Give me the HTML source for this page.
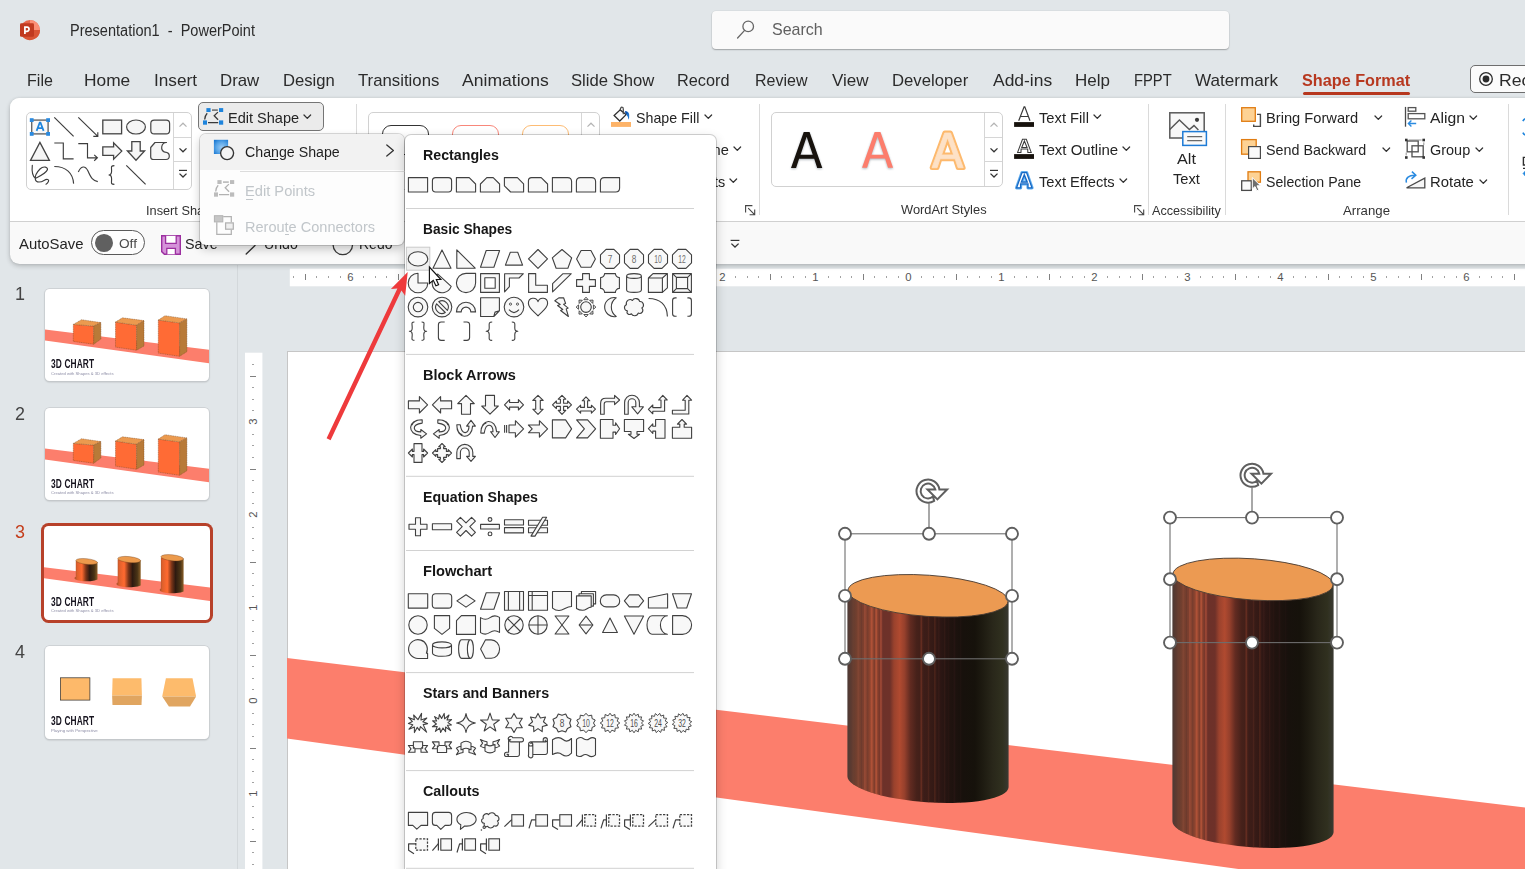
<!DOCTYPE html>
<html><head><meta charset="utf-8"><title>PowerPoint</title><style>html,body{margin:0;padding:0}
body{width:1525px;height:869px;overflow:hidden;position:relative;background:#e1e6e9;font-family:"Liberation Sans",sans-serif}
.a{position:absolute;display:block}
.t{position:absolute;white-space:nowrap;transform-origin:0 50%;display:block}
svg{overflow:visible}
#root{position:absolute;left:0;top:0;width:1525px;height:869px;overflow:hidden}</style></head><body><div id="root">
<svg class="a" style="left:17px;top:17px;" width="26" height="26" viewBox="0 0 26 26">
      <circle cx="13" cy="13" r="10" fill="#e8664a"/>
      <path d="M13 3 A10 10 0 0 1 23 13 L13 13 Z" fill="#fb8f76"/>
      <path d="M13 13 L23 13 A10 10 0 0 1 5 19 Z" fill="#d95535"/>
      <rect x="3" y="6.2" width="14" height="13.6" rx="1.3" fill="#c13a20"/>
      <path d="M7.9 16.9 V10.2 H10 a2.05 2.05 0 0 1 0 4.1 H8.2" fill="none" stroke="#fff" stroke-width="1.7"/>
    </svg>
<span id="t0" class="t" style="left:70.1px;top:22.5px;font-size:16px;line-height:16px;color:#2b2b2b;transform:scaleX(0.9080);">Presentation1&nbsp; -&nbsp; PowerPoint</span>
<div class="a" style="left:711.5px;top:10.5px;width:517px;height:38.5px;background:#fafafa;border-radius:4px;box-shadow:0 1px 1.5px rgba(0,0,0,.28),0 0 0 .5px rgba(0,0,0,.06);"></div>
<svg class="a" style="left:735px;top:17px;" width="20" height="24" viewBox="0 0 20 24"><circle cx="13.2" cy="9.4" r="5.3" fill="none" stroke="#666" stroke-width="1.3"/><path d="M9.6 13.4 L2.6 21" stroke="#666" stroke-width="1.3" stroke-linecap="round"/></svg>
<span id="t1" class="t" style="left:771.7px;top:21.0px;font-size:17px;line-height:17px;color:#606060;transform:scaleX(0.9427);">Search</span>
<span id="t2" class="t" style="left:26.5px;top:71.6px;font-size:17px;line-height:17px;color:#2b2b2b;transform:scaleX(0.9446);">File</span>
<span id="t3" class="t" style="left:83.9px;top:71.6px;font-size:17px;line-height:17px;color:#2b2b2b;transform:scaleX(1.0201);">Home</span>
<span id="t4" class="t" style="left:153.5px;top:71.6px;font-size:17px;line-height:17px;color:#2b2b2b;transform:scaleX(1.0117);">Insert</span>
<span id="t5" class="t" style="left:220.2px;top:71.6px;font-size:17px;line-height:17px;color:#2b2b2b;transform:scaleX(0.9901);">Draw</span>
<span id="t6" class="t" style="left:282.9px;top:71.6px;font-size:17px;line-height:17px;color:#2b2b2b;transform:scaleX(0.9793);">Design</span>
<span id="t7" class="t" style="left:357.5px;top:71.6px;font-size:17px;line-height:17px;color:#2b2b2b;transform:scaleX(0.9856);">Transitions</span>
<span id="t8" class="t" style="left:461.5px;top:71.6px;font-size:17px;line-height:17px;color:#2b2b2b;transform:scaleX(1.0334);">Animations</span>
<span id="t9" class="t" style="left:570.5px;top:71.6px;font-size:17px;line-height:17px;color:#2b2b2b;transform:scaleX(0.9801);">Slide Show</span>
<span id="t10" class="t" style="left:676.9px;top:71.6px;font-size:17px;line-height:17px;color:#2b2b2b;transform:scaleX(0.9583);">Record</span>
<span id="t11" class="t" style="left:754.9px;top:71.6px;font-size:17px;line-height:17px;color:#2b2b2b;transform:scaleX(0.9412);">Review</span>
<span id="t12" class="t" style="left:831.5px;top:71.6px;font-size:17px;line-height:17px;color:#2b2b2b;transform:scaleX(1.0028);">View</span>
<span id="t13" class="t" style="left:891.9px;top:71.6px;font-size:17px;line-height:17px;color:#2b2b2b;transform:scaleX(0.9834);">Developer</span>
<span id="t14" class="t" style="left:992.6px;top:71.6px;font-size:17px;line-height:17px;color:#2b2b2b;transform:scaleX(1.0259);">Add-ins</span>
<span id="t15" class="t" style="left:1074.8px;top:71.6px;font-size:17px;line-height:17px;color:#2b2b2b;transform:scaleX(1.0001);">Help</span>
<span id="t16" class="t" style="left:1133.6px;top:71.6px;font-size:17px;line-height:17px;color:#2b2b2b;transform:scaleX(0.8676);">FPPT</span>
<span id="t17" class="t" style="left:1194.7px;top:71.6px;font-size:17px;line-height:17px;color:#2b2b2b;transform:scaleX(1.0073);">Watermark</span>
<span id="t18" class="t" style="left:1301.8px;top:71.6px;font-size:17px;line-height:17px;color:#b7381f;font-weight:700;transform:scaleX(0.9540);">Shape Format</span>
<div class="a" style="left:1302.5px;top:91.6px;width:107px;height:3px;background:#b7381f;border-radius:1.5px;"></div>
<div class="a" style="left:1469.5px;top:64.5px;width:70px;height:28.5px;background:#fbfbfb;border:1px solid #6e6e6e;border-radius:5px;box-sizing:border-box;"></div>
<svg class="a" style="left:1478px;top:71px;" width="16" height="16" viewBox="0 0 16 16"><circle cx="8" cy="8" r="6.3" fill="none" stroke="#2b2b2b" stroke-width="1.3"/><circle cx="8" cy="8" r="3.4" fill="#2b2b2b"/></svg>
<span id="t19" class="t" style="left:1499.2px;top:71.6px;font-size:17px;line-height:17px;color:#2b2b2b;transform:scaleX(1.0368);">Rec</span>
<span id="t20" class="t" style="left:14.6px;top:285.4px;font-size:18px;line-height:18px;color:#444;transform:scaleX(0.9970);">1</span>
<span id="t21" class="t" style="left:14.6px;top:404.6px;font-size:18px;line-height:18px;color:#444;transform:scaleX(0.9970);">2</span>
<span id="t22" class="t" style="left:14.6px;top:523.4px;font-size:18px;line-height:18px;color:#c43e1c;transform:scaleX(0.9970);">3</span>
<span id="t23" class="t" style="left:14.6px;top:642.6px;font-size:18px;line-height:18px;color:#444;transform:scaleX(0.9970);">4</span>
<div class="a" style="left:44.8px;top:288.5px;width:164.4px;height:92.7px;background:#fff;border-radius:4.5px;overflow:hidden;box-shadow:0 0 0 .8px #c9cdd0,0 1px 2px rgba(0,0,0,.25);"><svg class="a" style="left:0;top:0" width="165" height="93"><polygon points="0,40.6 164.4,60.8 164.4,74.2 0,51.6" fill="#fc7e6c"/><polygon points="28.3,35.4 48.7,37.1 48.7,55.2 28.3,52.4" fill="#ff6b35" stroke="#7a4a22" stroke-width=".45" stroke-dasharray="1.2 .6"/><polygon points="28.3,35.4 36.5,30.7 55.9,33.6 48.7,37.1" fill="#eb9a4f" stroke="#7a4a22" stroke-width=".45" stroke-dasharray="1.2 .6"/><polygon points="48.7,37.1 55.9,33.6 55.9,50.1 48.7,55.2" fill="#b87a38" stroke="#7a4a22" stroke-width=".45" stroke-dasharray="1.2 .6"/><polygon points="70.5,33.1 91.6,36.2 91.6,61.2 70.5,58.1" fill="#ff6b35" stroke="#7a4a22" stroke-width=".45" stroke-dasharray="1.2 .6"/><polygon points="70.5,33.1 77.4,28.8 99,31.6 91.6,36.2" fill="#eb9a4f" stroke="#7a4a22" stroke-width=".45" stroke-dasharray="1.2 .6"/><polygon points="91.6,36.2 99,31.6 99,57 91.6,61.2" fill="#b87a38" stroke="#7a4a22" stroke-width=".45" stroke-dasharray="1.2 .6"/><polygon points="113.3,31.1 134.6,33.9 134.6,67.3 113.3,64.1" fill="#ff6b35" stroke="#7a4a22" stroke-width=".45" stroke-dasharray="1.2 .6"/><polygon points="113.3,31.1 120,26.7 141.9,29.9 134.6,33.9" fill="#eb9a4f" stroke="#7a4a22" stroke-width=".45" stroke-dasharray="1.2 .6"/><polygon points="134.6,33.9 141.9,29.9 141.9,62.7 134.6,67.3" fill="#b87a38" stroke="#7a4a22" stroke-width=".45" stroke-dasharray="1.2 .6"/></svg><span class="t" style="left:6.1px;top:68.9px;font-size:13.6px;line-height:13.6px;font-weight:700;color:#17141f;transform:scaleX(.615);letter-spacing:.2px">3D CHART</span><span class="t" style="left:6.1px;top:83.3px;font-size:3.6px;line-height:4px;color:#8d8da6;transform:scaleX(1.16);white-space:nowrap">Created with Shapes &amp; 3D effects</span></div>
<div class="a" style="left:44.8px;top:407.7px;width:164.4px;height:92.7px;background:#fff;border-radius:4.5px;overflow:hidden;box-shadow:0 0 0 .8px #c9cdd0,0 1px 2px rgba(0,0,0,.25);"><svg class="a" style="left:0;top:0" width="165" height="93"><polygon points="0,40.6 164.4,60.8 164.4,74.2 0,51.6" fill="#fc7e6c"/><polygon points="28.3,35.4 48.7,37.1 48.7,55.2 28.3,52.4" fill="#ff6b35" stroke="#7a4a22" stroke-width=".45" stroke-dasharray="1.2 .6"/><polygon points="28.3,35.4 36.5,30.7 55.9,33.6 48.7,37.1" fill="#eb9a4f" stroke="#7a4a22" stroke-width=".45" stroke-dasharray="1.2 .6"/><polygon points="48.7,37.1 55.9,33.6 55.9,50.1 48.7,55.2" fill="#b87a38" stroke="#7a4a22" stroke-width=".45" stroke-dasharray="1.2 .6"/><polygon points="70.5,33.1 91.6,36.2 91.6,61.2 70.5,58.1" fill="#ff6b35" stroke="#7a4a22" stroke-width=".45" stroke-dasharray="1.2 .6"/><polygon points="70.5,33.1 77.4,28.8 99,31.6 91.6,36.2" fill="#eb9a4f" stroke="#7a4a22" stroke-width=".45" stroke-dasharray="1.2 .6"/><polygon points="91.6,36.2 99,31.6 99,57 91.6,61.2" fill="#b87a38" stroke="#7a4a22" stroke-width=".45" stroke-dasharray="1.2 .6"/><polygon points="113.3,31.1 134.6,33.9 134.6,67.3 113.3,64.1" fill="#ff6b35" stroke="#7a4a22" stroke-width=".45" stroke-dasharray="1.2 .6"/><polygon points="113.3,31.1 120,26.7 141.9,29.9 134.6,33.9" fill="#eb9a4f" stroke="#7a4a22" stroke-width=".45" stroke-dasharray="1.2 .6"/><polygon points="134.6,33.9 141.9,29.9 141.9,62.7 134.6,67.3" fill="#b87a38" stroke="#7a4a22" stroke-width=".45" stroke-dasharray="1.2 .6"/></svg><span class="t" style="left:6.1px;top:68.9px;font-size:13.6px;line-height:13.6px;font-weight:700;color:#17141f;transform:scaleX(.615);letter-spacing:.2px">3D CHART</span><span class="t" style="left:6.1px;top:83.3px;font-size:3.6px;line-height:4px;color:#8d8da6;transform:scaleX(1.16);white-space:nowrap">Created with Shapes &amp; 3D effects</span></div>
<div class="a" style="left:41.2px;top:523px;width:171.9px;height:100px;background:#b7412a;border-radius:7.5px;"></div>
<div class="a" style="left:44.3px;top:526px;width:165.7px;height:94px;background:#fff;border-radius:4.5px;overflow:hidden;"><svg class="a" style="left:0;top:0" width="166" height="95"><defs><linearGradient id="cg"><stop offset="0" stop-color="#a5522a"/><stop offset=".12" stop-color="#e0602c"/><stop offset=".32" stop-color="#ff6a30"/><stop offset=".5" stop-color="#7a3418"/><stop offset=".66" stop-color="#2e1a10"/><stop offset=".86" stop-color="#4a3416"/><stop offset="1" stop-color="#8a5f28"/></linearGradient></defs><polygon points="0,41.3 166,61.4 166,75 0,52.2" fill="#fc7e6c"/><path d="M31.8 35.099999999999994 V50.800000000000004 A10.85 2.8000000000000007 0 0 0 53.5 53.6 V36.099999999999994 Z" fill="url(#cg)"/><ellipse cx="42.65" cy="35.49999999999999" rx="10.85" ry="2.8000000000000007" fill="#ec9a4c" stroke="#6a3a1a" stroke-width=".35" transform="rotate(6 42.65 35.099999999999994)"/><path d="M73.7 33.2 V56.6 A11.5 3.0000000000000018 0 0 0 96.7 59.4 V34.2 Z" fill="url(#cg)"/><ellipse cx="85.2" cy="33.6" rx="11.5" ry="3.0000000000000018" fill="#ec9a4c" stroke="#6a3a1a" stroke-width=".35" transform="rotate(6 85.2 33.2)"/><path d="M116.9 31.4 V62.6 A11.349999999999994 3.0 0 0 0 139.6 65.4 V32.4 Z" fill="url(#cg)"/><ellipse cx="128.25" cy="31.799999999999997" rx="11.349999999999994" ry="3.0" fill="#ec9a4c" stroke="#6a3a1a" stroke-width=".35" transform="rotate(6 128.25 31.4)"/></svg><span class="t" style="left:6.7px;top:68.5px;font-size:13.6px;line-height:13.6px;font-weight:700;color:#17141f;transform:scaleX(.615);letter-spacing:.2px">3D CHART</span><span class="t" style="left:6.7px;top:82.89999999999999px;font-size:3.6px;line-height:4px;color:#8d8da6;transform:scaleX(1.16);white-space:nowrap">Created with Shapes &amp; 3D effects</span></div>
<div class="a" style="left:44.8px;top:645.5px;width:164.4px;height:93px;background:#fff;border-radius:4.5px;overflow:hidden;box-shadow:0 0 0 .8px #c9cdd0,0 1px 2px rgba(0,0,0,.25);"><svg class="a" style="left:0;top:0" width="165" height="93"><rect x="15.4" y="31.8" width="29.5" height="22.3" fill="#fdb96a" stroke="#2e2e2e" stroke-width=".7"/><polygon points="67.6,32.3 96.4,32.3 96.9,49.6 67.1,49.6" fill="#fdbb6c"/><polygon points="67.1,49.6 96.9,49.6 96.5,58.9 67.5,58.9" fill="#e0a560"/><polygon points="120.9,32.3 147.5,32.3 151.1,50.4 117.2,50.4" fill="#fdbb6c"/><polygon points="117.2,50.4 151.1,50.4 145,60.4 123.9,60.4" fill="#e0a560"/></svg><span class="t" style="left:6.3px;top:68.7px;font-size:13.6px;line-height:13.6px;font-weight:700;color:#17141f;transform:scaleX(.615);letter-spacing:.2px">3D CHART</span><span class="t" style="left:6.3px;top:83.1px;font-size:3.6px;line-height:4px;color:#8d8da6;transform:scaleX(1.2);white-space:nowrap">Playing with Perspective</span></div>
<div class="a" style="left:237.2px;top:265px;width:1px;height:604px;background:#d3d8db;"></div>
<svg class="a" style="left:0;top:0" width="1525" height="300"><rect x="289.8" y="268.7" width="1236" height="17.6" fill="#fff"/><rect x="293" y="276" width="1" height="2" fill="#a2a2a2"/><rect x="305" y="274" width="1" height="6" fill="#808080"/><rect x="316" y="276" width="1" height="2" fill="#a2a2a2"/><rect x="328" y="276" width="1" height="2" fill="#a2a2a2"/><rect x="340" y="276" width="1" height="2" fill="#a2a2a2"/><rect x="363" y="276" width="1" height="2" fill="#a2a2a2"/><rect x="375" y="276" width="1" height="2" fill="#a2a2a2"/><rect x="386" y="276" width="1" height="2" fill="#a2a2a2"/><rect x="398" y="274" width="1" height="6" fill="#808080"/><rect x="409" y="276" width="1" height="2" fill="#a2a2a2"/><rect x="421" y="276" width="1" height="2" fill="#a2a2a2"/><rect x="433" y="276" width="1" height="2" fill="#a2a2a2"/><rect x="456" y="276" width="1" height="2" fill="#a2a2a2"/><rect x="468" y="276" width="1" height="2" fill="#a2a2a2"/><rect x="479" y="276" width="1" height="2" fill="#a2a2a2"/><rect x="491" y="274" width="1" height="6" fill="#808080"/><rect x="502" y="276" width="1" height="2" fill="#a2a2a2"/><rect x="514" y="276" width="1" height="2" fill="#a2a2a2"/><rect x="526" y="276" width="1" height="2" fill="#a2a2a2"/><rect x="549" y="276" width="1" height="2" fill="#a2a2a2"/><rect x="561" y="276" width="1" height="2" fill="#a2a2a2"/><rect x="572" y="276" width="1" height="2" fill="#a2a2a2"/><rect x="584" y="274" width="1" height="6" fill="#808080"/><rect x="595" y="276" width="1" height="2" fill="#a2a2a2"/><rect x="607" y="276" width="1" height="2" fill="#a2a2a2"/><rect x="619" y="276" width="1" height="2" fill="#a2a2a2"/><rect x="642" y="276" width="1" height="2" fill="#a2a2a2"/><rect x="654" y="276" width="1" height="2" fill="#a2a2a2"/><rect x="665" y="276" width="1" height="2" fill="#a2a2a2"/><rect x="677" y="274" width="1" height="6" fill="#808080"/><rect x="688" y="276" width="1" height="2" fill="#a2a2a2"/><rect x="700" y="276" width="1" height="2" fill="#a2a2a2"/><rect x="712" y="276" width="1" height="2" fill="#a2a2a2"/><rect x="735" y="276" width="1" height="2" fill="#a2a2a2"/><rect x="747" y="276" width="1" height="2" fill="#a2a2a2"/><rect x="758" y="276" width="1" height="2" fill="#a2a2a2"/><rect x="770" y="274" width="1" height="6" fill="#808080"/><rect x="781" y="276" width="1" height="2" fill="#a2a2a2"/><rect x="793" y="276" width="1" height="2" fill="#a2a2a2"/><rect x="805" y="276" width="1" height="2" fill="#a2a2a2"/><rect x="828" y="276" width="1" height="2" fill="#a2a2a2"/><rect x="840" y="276" width="1" height="2" fill="#a2a2a2"/><rect x="851" y="276" width="1" height="2" fill="#a2a2a2"/><rect x="863" y="274" width="1" height="6" fill="#808080"/><rect x="874" y="276" width="1" height="2" fill="#a2a2a2"/><rect x="886" y="276" width="1" height="2" fill="#a2a2a2"/><rect x="898" y="276" width="1" height="2" fill="#a2a2a2"/><rect x="921" y="276" width="1" height="2" fill="#a2a2a2"/><rect x="933" y="276" width="1" height="2" fill="#a2a2a2"/><rect x="944" y="276" width="1" height="2" fill="#a2a2a2"/><rect x="956" y="274" width="1" height="6" fill="#808080"/><rect x="967" y="276" width="1" height="2" fill="#a2a2a2"/><rect x="979" y="276" width="1" height="2" fill="#a2a2a2"/><rect x="991" y="276" width="1" height="2" fill="#a2a2a2"/><rect x="1014" y="276" width="1" height="2" fill="#a2a2a2"/><rect x="1026" y="276" width="1" height="2" fill="#a2a2a2"/><rect x="1037" y="276" width="1" height="2" fill="#a2a2a2"/><rect x="1049" y="274" width="1" height="6" fill="#808080"/><rect x="1060" y="276" width="1" height="2" fill="#a2a2a2"/><rect x="1072" y="276" width="1" height="2" fill="#a2a2a2"/><rect x="1084" y="276" width="1" height="2" fill="#a2a2a2"/><rect x="1107" y="276" width="1" height="2" fill="#a2a2a2"/><rect x="1119" y="276" width="1" height="2" fill="#a2a2a2"/><rect x="1130" y="276" width="1" height="2" fill="#a2a2a2"/><rect x="1142" y="274" width="1" height="6" fill="#808080"/><rect x="1153" y="276" width="1" height="2" fill="#a2a2a2"/><rect x="1165" y="276" width="1" height="2" fill="#a2a2a2"/><rect x="1177" y="276" width="1" height="2" fill="#a2a2a2"/><rect x="1200" y="276" width="1" height="2" fill="#a2a2a2"/><rect x="1212" y="276" width="1" height="2" fill="#a2a2a2"/><rect x="1223" y="276" width="1" height="2" fill="#a2a2a2"/><rect x="1235" y="274" width="1" height="6" fill="#808080"/><rect x="1246" y="276" width="1" height="2" fill="#a2a2a2"/><rect x="1258" y="276" width="1" height="2" fill="#a2a2a2"/><rect x="1270" y="276" width="1" height="2" fill="#a2a2a2"/><rect x="1293" y="276" width="1" height="2" fill="#a2a2a2"/><rect x="1305" y="276" width="1" height="2" fill="#a2a2a2"/><rect x="1316" y="276" width="1" height="2" fill="#a2a2a2"/><rect x="1328" y="274" width="1" height="6" fill="#808080"/><rect x="1339" y="276" width="1" height="2" fill="#a2a2a2"/><rect x="1351" y="276" width="1" height="2" fill="#a2a2a2"/><rect x="1363" y="276" width="1" height="2" fill="#a2a2a2"/><rect x="1386" y="276" width="1" height="2" fill="#a2a2a2"/><rect x="1398" y="276" width="1" height="2" fill="#a2a2a2"/><rect x="1409" y="276" width="1" height="2" fill="#a2a2a2"/><rect x="1421" y="274" width="1" height="6" fill="#808080"/><rect x="1432" y="276" width="1" height="2" fill="#a2a2a2"/><rect x="1444" y="276" width="1" height="2" fill="#a2a2a2"/><rect x="1456" y="276" width="1" height="2" fill="#a2a2a2"/><rect x="1479" y="276" width="1" height="2" fill="#a2a2a2"/><rect x="1491" y="276" width="1" height="2" fill="#a2a2a2"/><rect x="1502" y="276" width="1" height="2" fill="#a2a2a2"/><rect x="1514" y="274" width="1" height="6" fill="#808080"/></svg>
<span class="t" style="left:340.4px;top:272.3px;width:20px;text-align:center;font-size:11.3px;line-height:11px;color:#555">6</span>
<span class="t" style="left:433.4px;top:272.3px;width:20px;text-align:center;font-size:11.3px;line-height:11px;color:#555">5</span>
<span class="t" style="left:526.4px;top:272.3px;width:20px;text-align:center;font-size:11.3px;line-height:11px;color:#555">4</span>
<span class="t" style="left:619.4px;top:272.3px;width:20px;text-align:center;font-size:11.3px;line-height:11px;color:#555">3</span>
<span class="t" style="left:712.4px;top:272.3px;width:20px;text-align:center;font-size:11.3px;line-height:11px;color:#555">2</span>
<span class="t" style="left:805.4px;top:272.3px;width:20px;text-align:center;font-size:11.3px;line-height:11px;color:#555">1</span>
<span class="t" style="left:898.4px;top:272.3px;width:20px;text-align:center;font-size:11.3px;line-height:11px;color:#555">0</span>
<span class="t" style="left:991.4px;top:272.3px;width:20px;text-align:center;font-size:11.3px;line-height:11px;color:#555">1</span>
<span class="t" style="left:1084.4px;top:272.3px;width:20px;text-align:center;font-size:11.3px;line-height:11px;color:#555">2</span>
<span class="t" style="left:1177.4px;top:272.3px;width:20px;text-align:center;font-size:11.3px;line-height:11px;color:#555">3</span>
<span class="t" style="left:1270.4px;top:272.3px;width:20px;text-align:center;font-size:11.3px;line-height:11px;color:#555">4</span>
<span class="t" style="left:1363.4px;top:272.3px;width:20px;text-align:center;font-size:11.3px;line-height:11px;color:#555">5</span>
<span class="t" style="left:1456.4px;top:272.3px;width:20px;text-align:center;font-size:11.3px;line-height:11px;color:#555">6</span>
<svg class="a" style="left:245px;top:0" width="18" height="869"><rect x="0" y="352.7" width="17.4" height="520" fill="#fff"/><rect x="7" y="864" width="2" height="1" fill="#a2a2a2"/><rect x="7" y="852" width="2" height="1" fill="#a2a2a2"/><rect x="5" y="841" width="6" height="1" fill="#808080"/><rect x="7" y="829" width="2" height="1" fill="#a2a2a2"/><rect x="7" y="817" width="2" height="1" fill="#a2a2a2"/><rect x="7" y="806" width="2" height="1" fill="#a2a2a2"/><rect x="7" y="782" width="2" height="1" fill="#a2a2a2"/><rect x="7" y="771" width="2" height="1" fill="#a2a2a2"/><rect x="7" y="759" width="2" height="1" fill="#a2a2a2"/><rect x="5" y="748" width="6" height="1" fill="#808080"/><rect x="7" y="736" width="2" height="1" fill="#a2a2a2"/><rect x="7" y="724" width="2" height="1" fill="#a2a2a2"/><rect x="7" y="713" width="2" height="1" fill="#a2a2a2"/><rect x="7" y="689" width="2" height="1" fill="#a2a2a2"/><rect x="7" y="678" width="2" height="1" fill="#a2a2a2"/><rect x="7" y="666" width="2" height="1" fill="#a2a2a2"/><rect x="5" y="655" width="6" height="1" fill="#808080"/><rect x="7" y="643" width="2" height="1" fill="#a2a2a2"/><rect x="7" y="631" width="2" height="1" fill="#a2a2a2"/><rect x="7" y="620" width="2" height="1" fill="#a2a2a2"/><rect x="7" y="596" width="2" height="1" fill="#a2a2a2"/><rect x="7" y="585" width="2" height="1" fill="#a2a2a2"/><rect x="7" y="573" width="2" height="1" fill="#a2a2a2"/><rect x="5" y="562" width="6" height="1" fill="#808080"/><rect x="7" y="550" width="2" height="1" fill="#a2a2a2"/><rect x="7" y="538" width="2" height="1" fill="#a2a2a2"/><rect x="7" y="527" width="2" height="1" fill="#a2a2a2"/><rect x="7" y="503" width="2" height="1" fill="#a2a2a2"/><rect x="7" y="492" width="2" height="1" fill="#a2a2a2"/><rect x="7" y="480" width="2" height="1" fill="#a2a2a2"/><rect x="5" y="469" width="6" height="1" fill="#808080"/><rect x="7" y="457" width="2" height="1" fill="#a2a2a2"/><rect x="7" y="445" width="2" height="1" fill="#a2a2a2"/><rect x="7" y="434" width="2" height="1" fill="#a2a2a2"/><rect x="7" y="410" width="2" height="1" fill="#a2a2a2"/><rect x="7" y="399" width="2" height="1" fill="#a2a2a2"/><rect x="7" y="387" width="2" height="1" fill="#a2a2a2"/><rect x="5" y="376" width="6" height="1" fill="#808080"/><rect x="7" y="364" width="2" height="1" fill="#a2a2a2"/></svg>
<span class="t" style="left:243.0px;top:788.1px;width:20px;text-align:center;font-size:11.3px;line-height:11px;color:#555;transform:rotate(-90deg);transform-origin:center">1</span>
<span class="t" style="left:243.0px;top:695.1px;width:20px;text-align:center;font-size:11.3px;line-height:11px;color:#555;transform:rotate(-90deg);transform-origin:center">0</span>
<span class="t" style="left:243.0px;top:602.1px;width:20px;text-align:center;font-size:11.3px;line-height:11px;color:#555;transform:rotate(-90deg);transform-origin:center">1</span>
<span class="t" style="left:243.0px;top:509.1px;width:20px;text-align:center;font-size:11.3px;line-height:11px;color:#555;transform:rotate(-90deg);transform-origin:center">2</span>
<span class="t" style="left:243.0px;top:416.1px;width:20px;text-align:center;font-size:11.3px;line-height:11px;color:#555;transform:rotate(-90deg);transform-origin:center">3</span>
<div class="a" style="left:287px;top:351px;width:1240px;height:520px;background:#fff;border:1px solid #c6c6c6;box-sizing:border-box;"></div>
<svg class="a" style="left:0;top:0" width="1525" height="869" viewBox="0 0 1525 869"><defs><linearGradient id="bodyi" gradientUnits="userSpaceOnUse" x1="847.2" x2="1008.8000000000001" y1="0" y2="0"><stop offset="0" stop-color="#4b3a35"/><stop offset="0.02" stop-color="#5a3a31"/><stop offset="0.06" stop-color="#74402f"/><stop offset="0.1" stop-color="#7c3f2e"/><stop offset="0.14" stop-color="#8c442f"/><stop offset="0.185" stop-color="#8a412d"/><stop offset="0.215" stop-color="#6c3129"/><stop offset="0.265" stop-color="#6e3129"/><stop offset="0.29" stop-color="#9a422d"/><stop offset="0.325" stop-color="#b04a30"/><stop offset="0.355" stop-color="#96402c"/><stop offset="0.39" stop-color="#622b21"/><stop offset="0.43" stop-color="#46211a"/><stop offset="0.5" stop-color="#3a1c17"/><stop offset="0.58" stop-color="#2b1613"/><stop offset="0.64" stop-color="#20130f"/><stop offset="0.72" stop-color="#17110c"/><stop offset="0.79" stop-color="#16120b"/><stop offset="0.84" stop-color="#1e1b11"/><stop offset="0.9" stop-color="#29271a"/><stop offset="0.96" stop-color="#30301f"/><stop offset="0.985" stop-color="#35352a"/><stop offset="1" stop-color="#3c3c34"/></linearGradient><pattern id="stri" width="400" height="10" patternUnits="userSpaceOnUse" patternTransform="translate(847.2,0)"><rect x="5.7" y="0" width="1.3" height="10" fill="#6a4030" opacity="0.7"/><rect x="10.5" y="0" width="1.3" height="10" fill="#8a4a36" opacity="0.7"/><rect x="13.7" y="0" width="1.1" height="10" fill="#5e342a" opacity="0.6"/><rect x="17.0" y="0" width="1.5" height="10" fill="#a04e38" opacity="0.8"/><rect x="20.2" y="0" width="1.1" height="10" fill="#66342a" opacity="0.6"/><rect x="23.6" y="0" width="1.8" height="10" fill="#b8543a" opacity="0.9"/><rect x="26.8" y="0" width="1.0" height="10" fill="#6e352a" opacity="0.6"/><rect x="28.4" y="0" width="1.3" height="10" fill="#c25a3c" opacity="0.9"/><rect x="31.7" y="0" width="1.0" height="10" fill="#733629" opacity="0.5"/><rect x="33.1" y="0" width="1.5" height="10" fill="#b2503a" opacity="0.8"/><rect x="73.5" y="0" width="1.3" height="10" fill="#7a3524" opacity="0.8"/><rect x="76.8" y="0" width="1.0" height="10" fill="#36191a" opacity="0.5"/><rect x="80.8" y="0" width="1.1" height="10" fill="#5c2a1e" opacity="0.6"/><rect x="87.3" y="0" width="1.0" height="10" fill="#6a2e20" opacity="0.7"/><rect x="91.3" y="0" width="0.9" height="10" fill="#45201a" opacity="0.6"/><rect x="97.0" y="0" width="1.0" height="10" fill="#3c1c18" opacity="0.6"/><rect x="101.0" y="0" width="0.9" height="10" fill="#2e1614" opacity="0.5"/><rect x="106.7" y="0" width="1.0" height="10" fill="#33181a" opacity="0.5"/><rect x="113.1" y="0" width="0.9" height="10" fill="#22130f" opacity="0.5"/></pattern><linearGradient id="body2" gradientUnits="userSpaceOnUse" x1="1172.2" x2="1333.8" y1="0" y2="0"><stop offset="0" stop-color="#4b3a35"/><stop offset="0.02" stop-color="#5a3a31"/><stop offset="0.06" stop-color="#74402f"/><stop offset="0.1" stop-color="#7c3f2e"/><stop offset="0.14" stop-color="#8c442f"/><stop offset="0.185" stop-color="#8a412d"/><stop offset="0.215" stop-color="#6c3129"/><stop offset="0.265" stop-color="#6e3129"/><stop offset="0.29" stop-color="#9a422d"/><stop offset="0.325" stop-color="#b04a30"/><stop offset="0.355" stop-color="#96402c"/><stop offset="0.39" stop-color="#622b21"/><stop offset="0.43" stop-color="#46211a"/><stop offset="0.5" stop-color="#3a1c17"/><stop offset="0.58" stop-color="#2b1613"/><stop offset="0.64" stop-color="#20130f"/><stop offset="0.72" stop-color="#17110c"/><stop offset="0.79" stop-color="#16120b"/><stop offset="0.84" stop-color="#1e1b11"/><stop offset="0.9" stop-color="#29271a"/><stop offset="0.96" stop-color="#30301f"/><stop offset="0.985" stop-color="#35352a"/><stop offset="1" stop-color="#3c3c34"/></linearGradient><pattern id="stri2" width="400" height="10" patternUnits="userSpaceOnUse" patternTransform="translate(1172.2,0)"><rect x="5.7" y="0" width="1.3" height="10" fill="#6a4030" opacity="0.7"/><rect x="10.5" y="0" width="1.3" height="10" fill="#8a4a36" opacity="0.7"/><rect x="13.7" y="0" width="1.1" height="10" fill="#5e342a" opacity="0.6"/><rect x="17.0" y="0" width="1.5" height="10" fill="#a04e38" opacity="0.8"/><rect x="20.2" y="0" width="1.1" height="10" fill="#66342a" opacity="0.6"/><rect x="23.6" y="0" width="1.8" height="10" fill="#b8543a" opacity="0.9"/><rect x="26.8" y="0" width="1.0" height="10" fill="#6e352a" opacity="0.6"/><rect x="28.4" y="0" width="1.3" height="10" fill="#c25a3c" opacity="0.9"/><rect x="31.7" y="0" width="1.0" height="10" fill="#733629" opacity="0.5"/><rect x="33.1" y="0" width="1.5" height="10" fill="#b2503a" opacity="0.8"/><rect x="73.5" y="0" width="1.3" height="10" fill="#7a3524" opacity="0.8"/><rect x="76.8" y="0" width="1.0" height="10" fill="#36191a" opacity="0.5"/><rect x="80.8" y="0" width="1.1" height="10" fill="#5c2a1e" opacity="0.6"/><rect x="87.3" y="0" width="1.0" height="10" fill="#6a2e20" opacity="0.7"/><rect x="91.3" y="0" width="0.9" height="10" fill="#45201a" opacity="0.6"/><rect x="97.0" y="0" width="1.0" height="10" fill="#3c1c18" opacity="0.6"/><rect x="101.0" y="0" width="0.9" height="10" fill="#2e1614" opacity="0.5"/><rect x="106.7" y="0" width="1.0" height="10" fill="#33181a" opacity="0.5"/><rect x="113.1" y="0" width="0.9" height="10" fill="#22130f" opacity="0.5"/></pattern></defs><polygon points="287,658 1525,807.4 1525,908.3 287,738.6" fill="#fc7e6c"/><path d="M847.4 590.2 V776.0 A80.6 20.6 4 0 0 1008.6 787.2 V601.4 Z" fill="url(#bodyi)"/><path d="M847.4 590.2 V776.0 A80.6 20.6 4 0 0 1008.6 787.2 V601.4 Z" fill="url(#stri)"/><ellipse cx="928" cy="595.8" rx="80.19999999999999" ry="20.6" fill="#ec9a52" stroke="#4a3c34" stroke-width=".9" transform="rotate(4 928 595.8)"/><path d="M1172.4 573.8 V821.0 A80.6 20.6 4 0 0 1333.6 832.2 V585.0 Z" fill="url(#body2)"/><path d="M1172.4 573.8 V821.0 A80.6 20.6 4 0 0 1333.6 832.2 V585.0 Z" fill="url(#stri2)"/><ellipse cx="1253" cy="579.4" rx="80.19999999999999" ry="20.6" fill="#ec9a52" stroke="#4a3c34" stroke-width=".9" transform="rotate(4 1253 579.4)"/><rect x="845" y="533.8" width="167" height="125.0" fill="none" stroke="#6e6e6e" stroke-width="1.1"/><path d="M929 533.8 V503.2" stroke="#6e6e6e" stroke-width="1.2"/><circle cx="845" cy="533.8" r="6" fill="#fff" stroke="#5f5f5f" stroke-width="1.9"/><circle cx="845" cy="595.9" r="6" fill="#fff" stroke="#5f5f5f" stroke-width="1.9"/><circle cx="845" cy="658.8" r="6" fill="#fff" stroke="#5f5f5f" stroke-width="1.9"/><circle cx="929" cy="533.8" r="6" fill="#fff" stroke="#5f5f5f" stroke-width="1.9"/><circle cx="929" cy="658.8" r="6" fill="#fff" stroke="#5f5f5f" stroke-width="1.9"/><circle cx="1012" cy="533.8" r="6" fill="#fff" stroke="#5f5f5f" stroke-width="1.9"/><circle cx="1012" cy="595.9" r="6" fill="#fff" stroke="#5f5f5f" stroke-width="1.9"/><circle cx="1012" cy="658.8" r="6" fill="#fff" stroke="#5f5f5f" stroke-width="1.9"/><g transform="translate(927.9,491.2)"><path d="M11.50 -1.7 A11.5 11.5 0 1 0 6.26 9.64 L5.05 5.41 A7.4 7.4 0 1 1 7.40 -1.7 L-.4 -1.7 L9.5 8.2 L19.2 -1.7 Z" fill="#fff" stroke="#5f5f5f" stroke-width="2" stroke-linejoin="miter"/></g><rect x="1170" y="517.6" width="167" height="125.0" fill="none" stroke="#6e6e6e" stroke-width="1.1"/><path d="M1252 517.6 V487.4" stroke="#6e6e6e" stroke-width="1.2"/><circle cx="1170" cy="517.6" r="6" fill="#fff" stroke="#5f5f5f" stroke-width="1.9"/><circle cx="1170" cy="579.2" r="6" fill="#fff" stroke="#5f5f5f" stroke-width="1.9"/><circle cx="1170" cy="642.6" r="6" fill="#fff" stroke="#5f5f5f" stroke-width="1.9"/><circle cx="1252" cy="517.6" r="6" fill="#fff" stroke="#5f5f5f" stroke-width="1.9"/><circle cx="1252" cy="642.6" r="6" fill="#fff" stroke="#5f5f5f" stroke-width="1.9"/><circle cx="1337" cy="517.6" r="6" fill="#fff" stroke="#5f5f5f" stroke-width="1.9"/><circle cx="1337" cy="579.2" r="6" fill="#fff" stroke="#5f5f5f" stroke-width="1.9"/><circle cx="1337" cy="642.6" r="6" fill="#fff" stroke="#5f5f5f" stroke-width="1.9"/><g transform="translate(1251.9,475.4)"><path d="M11.50 -1.7 A11.5 11.5 0 1 0 6.26 9.64 L5.05 5.41 A7.4 7.4 0 1 1 7.40 -1.7 L-.4 -1.7 L9.5 8.2 L19.2 -1.7 Z" fill="#fff" stroke="#5f5f5f" stroke-width="2" stroke-linejoin="miter"/></g></svg>
<div class="a" style="left:9.8px;top:97.7px;width:1530px;height:166.1px;background:#f9f9f9;border-radius:9.5px 0 0 9.5px;box-shadow:0 2px 5px rgba(0,0,0,.2),0 0 3px rgba(0,0,0,.08);"></div>
<div class="a" style="left:9.8px;top:97.7px;width:1530px;height:123.2px;background:#fff;border-radius:9.5px 0 0 0;border-bottom:1px solid #d0d0d0;"></div>
<div class="a" style="left:26px;top:112px;width:166px;height:78px;border:1px solid #d1d1d1;border-radius:5px;box-sizing:border-box;background:#fff;"></div>
<div class="a" style="left:173px;top:113px;width:1px;height:76px;background:#d6d6d6;"></div>
<div class="a" style="left:174px;top:137px;width:17px;height:1px;background:#d6d6d6;"></div>
<div class="a" style="left:174px;top:161px;width:17px;height:1px;background:#d6d6d6;"></div>
<svg class="a" style="left:176px;top:118px;" width="14" height="14" viewBox="0 0 14 14"><path d="M3.5 8.6 L7 5.2 L10.5 8.6" fill="none" stroke="#b4b4b4" stroke-width="1.2"/></svg>
<svg class="a" style="left:176px;top:143px;" width="14" height="14" viewBox="0 0 14 14"><path d="M3.5 5.4 L7 8.8 L10.5 5.4" fill="none" stroke="#333" stroke-width="1.3"/></svg>
<svg class="a" style="left:176px;top:167px;" width="14" height="14" viewBox="0 0 14 14"><path d="M3 3.4 H11" stroke="#333" stroke-width="1.2"/><path d="M3.5 6.6 L7 10 L10.5 6.6" fill="none" stroke="#333" stroke-width="1.3"/></svg>
<svg class="a" style="left:30px;top:115px;" width="144" height="74" viewBox="0 0 144 74"><g transform="translate(10.0,12.0)"><rect x="-8.3" y="-6.9" width="16.4" height="13.8" fill="#f8f8f8" stroke="#666" stroke-width="1.4"/><path d="M-3.4 3.9 L-.3 -4.3 L.5 -4.3 L3.6 3.9 M-2.2 1.2 H2.4" fill="none" stroke="#1e84dc" stroke-width="1.75"/><rect x="-10.200000000000001" y="-8.8" width="3.8" height="3.8" fill="#2a8ae0"/><rect x="-10.200000000000001" y="5.0" width="3.8" height="3.8" fill="#2a8ae0"/><rect x="6.199999999999999" y="-8.8" width="3.8" height="3.8" fill="#2a8ae0"/><rect x="6.199999999999999" y="5.0" width="3.8" height="3.8" fill="#2a8ae0"/></g><g transform="translate(34.0,12.0)"><path d="M-9.7 -9.6 L9.6 9.4" fill="none" stroke="#3d3d3d" stroke-width="1.15"/></g><g transform="translate(58.0,12.0)"><path d="M-9.7 -9.6 L9.8 9.4 M9.8 5.2 V9.4 H5.3" fill="none" stroke="#3d3d3d" stroke-width="1.15"/></g><g transform="translate(82.0,12.0)"><rect x="-9.2" y="-6.9" width="18.8" height="13.7" fill="#f6f6f6" stroke="#444" stroke-width="1.3"/></g><g transform="translate(106.0,12.0)"><ellipse cx="0" cy="0" rx="9.4" ry="7" fill="#f6f6f6" stroke="#444" stroke-width="1.2"/></g><g transform="translate(130.0,12.0)"><rect x="-9.2" y="-6.9" width="18.8" height="13.7" rx="3.4" fill="#f6f6f6" stroke="#444" stroke-width="1.2"/></g><g transform="translate(10.0,36.0)"><path d="M-.1 -8.6 L9.4 9.4 H-9.5 Z" fill="#f6f6f6" stroke="#444" stroke-width="1.3" stroke-linejoin="miter"/></g><g transform="translate(34.0,36.0)"><path d="M-9.7 -8 H-.7 V7.9 H9.6" fill="none" stroke="#3d3d3d" stroke-width="1.15"/></g><g transform="translate(58.0,36.0)"><path d="M-9.7 -7.4 H-.5 V6.8 H9.2 M6.2 3.9 L9.4 6.8 L6.2 9.7" fill="none" stroke="#3d3d3d" stroke-width="1.15"/></g><g transform="translate(82.0,36.0)"><path d="M-9.2 -4.1 H1.6 V-8.2 L9.8 .1 L1.6 8.3 V4.3 H-9.2 Z" fill="#f6f6f6" stroke="#444" stroke-width="1.3" stroke-linejoin="miter"/></g><g transform="translate(106.0,36.0)"><path d="M-4.2 -9.3 H4.2 V0 H8.6 L0 9.3 L-8.6 0 H-4.2 Z" fill="#f6f6f6" stroke="#444" stroke-width="1.3" stroke-linejoin="miter"/></g><g transform="translate(130.0,36.0)"><path d="M-5 -8.5 H6.5 A5 5 0 0 0 5 1.2 Q9.3 1.5 9.3 5 Q9.3 8.5 6 8.5 H-6.5 Q-9.3 8.5 -9.3 6 V-3.5 Z" fill="#f6f6f6" stroke="#444" stroke-width="1.2" stroke-linejoin="round"/></g><g transform="translate(10.0,60.0)"><path d="M-7.7 -9.6 C-8.4 -3 -6.8 1.6 -4.6 3.4 C-1 1.5 6 -1.5 7.4 -5.2 C8.2 -8 3.5 -9.4 0 -6 C-3 -3 -5.5 1 -4.6 4.6 C-3.8 8 1 7.4 4 5.4 C7 3.6 9.4 4.4 8.4 6.6 C7.8 8 6.8 8.8 6 9.2" fill="none" stroke="#3d3d3d" stroke-width="1.15" stroke-linecap="round"/></g><g transform="translate(34.0,60.0)"><path d="M-9.7 -8.5 C2 -8.5 9 -2 9.6 8.6" fill="none" stroke="#3d3d3d" stroke-width="1.15"/></g><g transform="translate(58.0,60.0)"><path d="M-9.7 -2.9 C-7 -9 -3 -10 0 -4 C3 3 5 6 9.8 6.6" fill="none" stroke="#3d3d3d" stroke-width="1.15"/></g><g transform="translate(82.0,60.0)"><path d="M2.4 -9.4 C-1.6 -9.4 -.4 -8 -.4 -4 C-.4 -1 -1.2 0 -3.4 0 C-1.2 0 -.4 1 -.4 4 C-.4 8 -1.6 9.4 2.4 9.4" fill="none" stroke="#3d3d3d" stroke-width="1.15"/></g><g transform="translate(106.0,60.0)"><path d="M-9.7 -9.6 L9.6 9.4" fill="none" stroke="#3d3d3d" stroke-width="1.15"/></g></svg>
<span id="t24" class="t" style="left:145.9px;top:203.5px;font-size:13.2px;line-height:13.2px;color:#333;transform:scaleX(0.9674);">Insert Shapes</span>
<div class="a" style="left:198.3px;top:102.4px;width:125.5px;height:29px;background:#ebebeb;border:1px solid #757575;border-radius:5px;box-sizing:border-box;"></div>
<svg class="a" style="left:202px;top:107px;" width="22" height="19" viewBox="0 0 22 19"><path d="M10 3.1 H15.8" stroke="#777" stroke-width="1.7"/><path d="M5.2 6.2 Q2.8 8.8 2.7 12.4 M15.9 5.1 L12.2 8.7 L16.1 12.8 M6 15.6 H16.2" fill="none" stroke="#3a3a3a" stroke-width="1.3"/>
      <rect x="4.4" y="1.1" width="4.2" height="3.9" fill="#1e84dc"/><rect x="17" y="1.1" width="4.2" height="3.9" fill="#1e84dc"/>
      <rect x="1" y="13.4" width="4" height="4.3" fill="#1e84dc"/><rect x="17" y="13.4" width="4.2" height="4.3" fill="#1e84dc"/></svg>
<span id="t25" class="t" style="left:228.1px;top:109.8px;font-size:15px;line-height:15px;color:#242424;transform:scaleX(0.9682);">Edit Shape</span>
<svg class="a" style="left:303.2px;top:113.5px" width="8.6" height="5.4"><path d="M1 1 L4.3 4.4 L7.6 1" fill="none" stroke="#333" stroke-width="1.3" stroke-linecap="round" stroke-linejoin="round"/></svg>
<div class="a" style="left:356px;top:104px;width:1px;height:111px;background:#dadada;"></div>
<div class="a" style="left:368px;top:112px;width:232px;height:78px;border:1px solid #d1d1d1;border-radius:5px;box-sizing:border-box;background:#fff;"></div>
<div class="a" style="left:581px;top:113px;width:1px;height:76px;background:#d6d6d6;"></div>
<svg class="a" style="left:583.5px;top:118px;" width="14" height="14" viewBox="0 0 14 14"><path d="M3.5 8.6 L7 5.2 L10.5 8.6" fill="none" stroke="#b4b4b4" stroke-width="1.2"/></svg>
<div class="a" style="left:381.5px;top:125px;width:47px;height:30px;border:1.7px solid #333;border-radius:9px;box-sizing:border-box;"></div>
<div class="a" style="left:451.5px;top:125px;width:47px;height:30px;border:1.5px solid #f8877a;border-radius:9px;box-sizing:border-box;"></div>
<div class="a" style="left:521.5px;top:125px;width:47px;height:30px;border:1.5px solid #fdbc74;border-radius:9px;box-sizing:border-box;"></div>
<svg class="a" style="left:609px;top:104px;" width="24" height="24" viewBox="0 0 24 24"><rect x="2" y="18" width="20" height="4.9" fill="#fdb368"/>
       <path d="M5.1 11.5 L11.2 5.9 L17.1 10.6 L10.8 17 Z" fill="#fbfbfb" stroke="#2e2e2e" stroke-width="1.25" stroke-linejoin="miter"/>
       <path d="M11.2 6.2 Q11.6 3 13 3.2 Q14.4 3.3 14.3 5.2 V10.2" fill="none" stroke="#4a4a4a" stroke-width="1.25"/>
       <path d="M15.8 7.2 Q19.8 6.6 20.2 10.8 Q20.4 13.8 19.6 15.8 Q18.8 11.8 17.3 10.4 Z" fill="#1a73d0"/><path d="M15.8 7.2 Q18.6 7.2 18.6 9.6 L17.3 10.4 Z" fill="#0f4fa8"/></svg>
<span id="t26" class="t" style="left:636.1px;top:110.0px;font-size:15px;line-height:15px;color:#242424;transform:scaleX(0.9489);">Shape Fill</span>
<svg class="a" style="left:704.2px;top:114.0px" width="8.6" height="5.4"><path d="M1 1 L4.3 4.4 L7.6 1" fill="none" stroke="#333" stroke-width="1.3" stroke-linecap="round" stroke-linejoin="round"/></svg>
<span id="t27" class="t" style="left:636.1px;top:142.0px;font-size:15px;line-height:15px;color:#242424;transform:scaleX(0.9766);">Shape Outline</span>
<svg class="a" style="left:733.2px;top:145.8px" width="8.6" height="5.4"><path d="M1 1 L4.3 4.4 L7.6 1" fill="none" stroke="#333" stroke-width="1.3" stroke-linecap="round" stroke-linejoin="round"/></svg>
<span id="t28" class="t" style="left:636.1px;top:173.7px;font-size:15px;line-height:15px;color:#242424;transform:scaleX(0.9589);">Shape Effects</span>
<svg class="a" style="left:729.2px;top:177.9px" width="8.6" height="5.4"><path d="M1 1 L4.3 4.4 L7.6 1" fill="none" stroke="#333" stroke-width="1.3" stroke-linecap="round" stroke-linejoin="round"/></svg>
<svg class="a" style="left:745px;top:205px;" width="11" height="11" viewBox="0 0 11 11"><path d="M.6 7.4 V.6 H7.4" fill="none" stroke="#444" stroke-width="1.1"/><path d="M3.2 3.2 L9.6 9.6 M9.7 4.6 V9.7 H4.6" fill="none" stroke="#444" stroke-width="1.1"/></svg>
<div class="a" style="left:759px;top:104px;width:1px;height:111px;background:#dadada;"></div>
<div class="a" style="left:771px;top:112px;width:232px;height:75px;border:1px solid #d1d1d1;border-radius:5px;box-sizing:border-box;background:#fff;"></div>
<div class="a" style="left:984px;top:113px;width:1px;height:73px;background:#d6d6d6;"></div>
<div class="a" style="left:985px;top:137px;width:17px;height:1px;background:#d6d6d6;"></div>
<div class="a" style="left:985px;top:161px;width:17px;height:1px;background:#d6d6d6;"></div>
<svg class="a" style="left:986.5px;top:117.5px;" width="14" height="14" viewBox="0 0 14 14"><path d="M3.5 8.6 L7 5.2 L10.5 8.6" fill="none" stroke="#b4b4b4" stroke-width="1.2"/></svg>
<svg class="a" style="left:986.5px;top:142.5px;" width="14" height="14" viewBox="0 0 14 14"><path d="M3.5 5.4 L7 8.8 L10.5 5.4" fill="none" stroke="#333" stroke-width="1.3"/></svg>
<svg class="a" style="left:986.5px;top:166.5px;" width="14" height="14" viewBox="0 0 14 14"><path d="M3 3.4 H11" stroke="#333" stroke-width="1.2"/><path d="M3.5 6.6 L7 10 L10.5 6.6" fill="none" stroke="#333" stroke-width="1.3"/></svg>
<svg class="a" style="left:787px;top:128.1px;filter:drop-shadow(.6px 1.6px 1px rgba(40,60,80,.38));overflow:visible" width="39.3" height="43.9"><g transform="translate(4,4)"><path d="M12.74 0 H18.56 L31.30 35.9 H26.23 L23.22 26.67 H8.08 L5.07 35.9 H0 Z M15.65 4.85 L9.55 22.69 H21.75 Z" fill="#17120d" fill-rule="evenodd"/></g></svg>
<svg class="a" style="left:857.9px;top:128.1px;filter:drop-shadow(.6px 1.6px 1px rgba(40,60,80,.38));overflow:visible" width="39.1" height="43.8"><g transform="translate(4,4)"><path d="M12.66 0 H18.44 L31.10 35.8 H26.06 L23.08 26.60 H8.02 L5.04 35.8 H0 Z M15.55 4.83 L9.49 22.63 H21.61 Z" fill="#fc7d6c" fill-rule="evenodd"/></g></svg>
<svg class="a" style="left:927.7px;top:128.8px;overflow:visible" width="40" height="44"><g transform="translate(4,4)"><path d="M12.69 0 H18.51 L31.20 34.7 H26.12 L23.15 25.78 H8.05 L5.08 34.7 H0 Z M15.60 4.68 L9.52 21.93 H21.68 Z" fill="#fdb96d" stroke="#fdb96d" stroke-width="4.8" stroke-linejoin="round" fill-rule="evenodd"/><path d="M12.69 0 H18.51 L31.20 34.7 H26.12 L23.15 25.78 H8.05 L5.08 34.7 H0 Z M15.60 4.68 L9.52 21.93 H21.68 Z" fill="#fde1c6" stroke="#fde1c6" stroke-width=".8" stroke-linejoin="round" fill-rule="evenodd"/></g></svg>
<svg class="a" style="left:1012px;top:104px;" width="24" height="24" viewBox="0 0 24 24"><path d="M6.7 16.7 L12.1 2.9 h.7 L18 16.7 M8.5 12.5 H16.3" fill="none" stroke="#3a3a3a" stroke-width="1.2"/><rect x="2.1" y="18.1" width="19.9" height="4.8" fill="#17120d"/></svg>
<span id="t29" class="t" style="left:1038.8px;top:110.0px;font-size:15px;line-height:15px;color:#242424;transform:scaleX(0.9819);">Text Fill</span>
<svg class="a" style="left:1093.3px;top:114.0px" width="8.6" height="5.4"><path d="M1 1 L4.3 4.4 L7.6 1" fill="none" stroke="#333" stroke-width="1.3" stroke-linecap="round" stroke-linejoin="round"/></svg>
<svg class="a" style="left:1012px;top:136px;" width="24" height="24" viewBox="0 0 24 24"><g transform="translate(5.6,3.2)"><path d="M4.88 0 H8.72 L13.60 13.2 H10.25 L10.09 9.81 H3.51 L3.35 13.2 H0 Z M6.80 1.78 L4.15 8.34 H9.45 Z" fill="#fff" stroke="#3a3a3a" stroke-width="1.05" fill-rule="evenodd" stroke-linejoin="miter"/></g><rect x="2.1" y="18.1" width="19.9" height="4.8" fill="#17120d"/></svg>
<span id="t30" class="t" style="left:1038.8px;top:142.0px;font-size:15px;line-height:15px;color:#242424;transform:scaleX(0.9997);">Text Outline</span>
<svg class="a" style="left:1122.4px;top:145.8px" width="8.6" height="5.4"><path d="M1 1 L4.3 4.4 L7.6 1" fill="none" stroke="#333" stroke-width="1.3" stroke-linecap="round" stroke-linejoin="round"/></svg>
<svg class="a" style="left:1012px;top:168px;" width="24" height="24" viewBox="0 0 24 24"><g transform="translate(4.6,4.6)"><path d="M5.41 0 H9.99 L15.40 15.2 H11.40 L11.43 11.29 H3.97 L4.00 15.2 H0 Z M7.70 2.05 L4.70 9.61 H10.70 Z" fill="#5aa8ec" stroke="#62aeee" stroke-width="3.2" fill-rule="evenodd" stroke-linejoin="round"/><path d="M5.41 0 H9.99 L15.40 15.2 H11.40 L11.43 11.29 H3.97 L4.00 15.2 H0 Z M7.70 2.05 L4.70 9.61 H10.70 Z" fill="#fff" stroke="#1668c4" stroke-width="1.3" fill-rule="evenodd" stroke-linejoin="miter"/></g></svg>
<span id="t31" class="t" style="left:1038.8px;top:174.2px;font-size:15px;line-height:15px;color:#242424;transform:scaleX(0.9802);">Text Effects</span>
<svg class="a" style="left:1118.7px;top:178.0px" width="8.6" height="5.4"><path d="M1 1 L4.3 4.4 L7.6 1" fill="none" stroke="#333" stroke-width="1.3" stroke-linecap="round" stroke-linejoin="round"/></svg>
<span id="t32" class="t" style="left:900.7px;top:202.7px;font-size:13.2px;line-height:13.2px;color:#333;transform:scaleX(0.9757);">WordArt Styles</span>
<svg class="a" style="left:1133.5px;top:205px;" width="11" height="11" viewBox="0 0 11 11"><path d="M.6 7.4 V.6 H7.4" fill="none" stroke="#444" stroke-width="1.1"/><path d="M3.2 3.2 L9.6 9.6 M9.7 4.6 V9.7 H4.6" fill="none" stroke="#444" stroke-width="1.1"/></svg>
<div class="a" style="left:1148px;top:104px;width:1px;height:111px;background:#dadada;"></div>
<svg class="a" style="left:1167px;top:110px;" width="42" height="38" viewBox="0 0 42 38"><rect x="2.8" y="2.8" width="34.4" height="25.2" fill="#f8f8f8" stroke="#5e5e5e" stroke-width="1.55"/>
      <path d="M2.8 19.4 L12.4 10 L22.4 19.6 L27 15.6 L31.4 20" fill="none" stroke="#555" stroke-width="1.45"/><circle cx="30" cy="9.8" r="2.1" fill="#3a3a3a"/>
      <rect x="15.8" y="21.6" width="23.6" height="13.8" fill="#fafafa" stroke="#1e7bd6" stroke-width="1.5"/><path d="M20.2 26.6 H35.2 M20.2 30.6 H35.2" stroke="#6a6a6a" stroke-width="1.1"/></svg>
<span id="t33" class="t" style="left:1176.8px;top:150.9px;font-size:15px;line-height:15px;color:#242424;transform:scaleX(1.0819);">Alt</span>
<span id="t34" class="t" style="left:1172.9px;top:171.2px;font-size:15px;line-height:15px;color:#242424;transform:scaleX(0.9777);">Text</span>
<span id="t35" class="t" style="left:1151.8px;top:203.5px;font-size:13.2px;line-height:13.2px;color:#333;transform:scaleX(0.9591);">Accessibility</span>
<div class="a" style="left:1225px;top:104px;width:1px;height:111px;background:#dadada;"></div>
<svg class="a" style="left:1239px;top:105px;" width="24" height="24" viewBox="0 0 24 24"><path d="M14.7 19.4 V21.4 H21.4 V9.4 H18" fill="none" stroke="#4a4a4a" stroke-width="1.4"/><rect x="2.7" y="2.7" width="13.6" height="13.6" fill="#fdd294" stroke="#e07c12" stroke-width="1.3"/></svg>
<span id="t36" class="t" style="left:1266.3px;top:110.0px;font-size:15px;line-height:15px;color:#242424;transform:scaleX(0.9774);">Bring Forward</span>
<svg class="a" style="left:1373.9px;top:114.9px" width="8.6" height="5.4"><path d="M1 1 L4.3 4.4 L7.6 1" fill="none" stroke="#333" stroke-width="1.3" stroke-linecap="round" stroke-linejoin="round"/></svg>
<svg class="a" style="left:1239px;top:137px;" width="24" height="24" viewBox="0 0 24 24"><rect x="2.6" y="2.6" width="14.6" height="14.6" fill="#fdd294" stroke="#e07c12" stroke-width="1.3"/><rect x="9.6" y="9.6" width="11.8" height="11.8" fill="#fafafa" stroke="#4a4a4a" stroke-width="1.2"/></svg>
<span id="t37" class="t" style="left:1266.3px;top:142.2px;font-size:15px;line-height:15px;color:#242424;transform:scaleX(0.9540);">Send Backward</span>
<svg class="a" style="left:1381.7px;top:146.7px" width="8.6" height="5.4"><path d="M1 1 L4.3 4.4 L7.6 1" fill="none" stroke="#333" stroke-width="1.3" stroke-linecap="round" stroke-linejoin="round"/></svg>
<svg class="a" style="left:1239px;top:169px;" width="24" height="24" viewBox="0 0 24 24"><rect x="9" y="2.8" width="12.4" height="10.4" fill="#fdd294" stroke="#e07c12" stroke-width="1.3"/><rect x="2.7" y="11.8" width="9.6" height="9.6" fill="#fafafa" stroke="#4a4a4a" stroke-width="1.3"/><path d="M13.3 8.6 V20 L16 17.6 L17.9 21.8 L19.9 20.9 L18 16.8 H21.6 Z" fill="#6e6e6e" stroke="#fff" stroke-width="1" stroke-linejoin="round"/></svg>
<span id="t38" class="t" style="left:1266.3px;top:174.3px;font-size:15px;line-height:15px;color:#242424;transform:scaleX(0.9433);">Selection Pane</span>
<svg class="a" style="left:1403px;top:105px;" width="24" height="24" viewBox="0 0 24 24"><path d="M2.5 1.9 V21.7" stroke="#4a4a4a" stroke-width="1.3"/><rect x="5.2" y="2.6" width="7.6" height="3.6" fill="#fff" stroke="#555" stroke-width="1.3"/><rect x="5.2" y="8.6" width="16.6" height="5.2" fill="#fff" stroke="#555" stroke-width="1.3"/><path d="M13.2 18.5 H5.4 M8.4 15.6 L5.4 18.5 L8.4 21.4" fill="none" stroke="#2b8be0" stroke-width="1.4"/></svg>
<span id="t39" class="t" style="left:1429.8px;top:110.0px;font-size:15px;line-height:15px;color:#242424;transform:scaleX(1.0477);">Align</span>
<svg class="a" style="left:1468.9px;top:114.5px" width="8.6" height="5.4"><path d="M1 1 L4.3 4.4 L7.6 1" fill="none" stroke="#333" stroke-width="1.3" stroke-linecap="round" stroke-linejoin="round"/></svg>
<svg class="a" style="left:1403px;top:137px;" width="24" height="24" viewBox="0 0 24 24"><rect x="4.2" y="4" width="11" height="10.8" fill="none" stroke="#555" stroke-width="1.35"/><rect x="9" y="8.8" width="11.2" height="11" fill="none" stroke="#555" stroke-width="1.35"/><path d="M5.6 3 H18.6 M20.8 5.4 V8 M3.2 15.6 V18.4" stroke="#777" stroke-width=".8"/><rect x="1.9999999999999998" y="1.7" width="2.6" height="2.6" fill="#333"/><rect x="1.9999999999999998" y="19.2" width="2.6" height="2.6" fill="#333"/><rect x="19.4" y="1.7" width="2.6" height="2.6" fill="#333"/><rect x="19.4" y="19.2" width="2.6" height="2.6" fill="#333"/></svg>
<span id="t40" class="t" style="left:1429.8px;top:142.2px;font-size:15px;line-height:15px;color:#242424;transform:scaleX(0.9637);">Group</span>
<svg class="a" style="left:1475.4px;top:146.5px" width="8.6" height="5.4"><path d="M1 1 L4.3 4.4 L7.6 1" fill="none" stroke="#333" stroke-width="1.3" stroke-linecap="round" stroke-linejoin="round"/></svg>
<svg class="a" style="left:1403px;top:169px;" width="24" height="24" viewBox="0 0 24 24"><path d="M3.6 18.8 H21.8 V9.2 Z" fill="#f6f6f6" stroke="#4a4a4a" stroke-width="1.3" stroke-linejoin="miter"/><path d="M3.4 13.6 C2.2 9.4 6 5.8 12.4 6.3 M8.9 2.6 L12.8 6.3 L8.5 9.8" fill="none" stroke="#2b8be0" stroke-width="1.5"/></svg>
<span id="t41" class="t" style="left:1429.8px;top:174.3px;font-size:15px;line-height:15px;color:#242424;transform:scaleX(0.9926);">Rotate</span>
<svg class="a" style="left:1478.5px;top:178.5px" width="8.6" height="5.4"><path d="M1 1 L4.3 4.4 L7.6 1" fill="none" stroke="#333" stroke-width="1.3" stroke-linecap="round" stroke-linejoin="round"/></svg>
<span id="t42" class="t" style="left:1342.7px;top:203.5px;font-size:13.2px;line-height:13.2px;color:#333;transform:scaleX(1.0012);">Arrange</span>
<div class="a" style="left:1508px;top:104px;width:1px;height:111px;background:#dadada;"></div>
<svg class="a" style="left:1518px;top:100px;" width="8" height="100" viewBox="0 0 8 100"><path d="M4.9 21.2 Q5.8 19.2 7.4 18.7 M4.9 32.6 Q5.8 34.6 7.4 35.1" fill="none" stroke="#1e84dc" stroke-width="1.7"/><path d="M7.4 71 L5.2 73.5 L7.4 76 Z" fill="#1e84dc" stroke="#1e84dc" stroke-width="1"/><path d="M7.4 57.4 H5.4 V65 H7.4 M5 68.4 H7.4" fill="none" stroke="#2e2e2e" stroke-width="1.4"/></svg>
<span id="t43" class="t" style="left:19.3px;top:235.9px;font-size:15px;line-height:15px;color:#242424;transform:scaleX(0.9919);">AutoSave</span>
<div class="a" style="left:90.8px;top:229.9px;width:54.4px;height:25px;border:1.1px solid #5a5a5a;border-radius:13px;box-sizing:border-box;background:#fdfdfd;"></div>
<div class="a" style="left:95px;top:234px;width:17.8px;height:17.8px;background:#606060;border-radius:50%;"></div>
<span id="t44" class="t" style="left:119.4px;top:236.8px;font-size:13px;line-height:13px;color:#4a4a4a;transform:scaleX(1.0497);">Off</span>
<svg class="a" style="left:160px;top:233px;" width="22" height="24" viewBox="0 0 22 24"><path d="M1.7 2.8 H20.3 V21.3 H4.4 L1.7 18.6 Z" fill="#d592d9" stroke="#9c2fa0" stroke-width="1.4" stroke-linejoin="miter"/><path d="M5.6 2.8 V10.3 H16.2 V2.8" fill="#fff" stroke="#9c2fa0" stroke-width="1.3"/><path d="M6.8 21.3 V15.4 H15.4 V21.3" fill="#fff" stroke="#9c2fa0" stroke-width="1.3"/></svg>
<span id="t45" class="t" style="left:184.8px;top:235.9px;font-size:15px;line-height:15px;color:#242424;transform:scaleX(0.9551);">Save</span>
<svg class="a" style="left:243px;top:236.4px;" width="22" height="22" viewBox="0 0 22 22"><path d="M3.2 18 L12 9.4" stroke="#333" stroke-width="1.4" stroke-linecap="round"/></svg>
<span id="t46" class="t" style="left:264.3px;top:236.0px;font-size:15px;line-height:15px;color:#242424;transform:scaleX(0.9438);">Undo</span>
<svg class="a" style="left:331px;top:233px;" width="24" height="24" viewBox="0 0 24 24"><circle cx="11.8" cy="12" r="9.7" fill="none" stroke="#3a3a3a" stroke-width="1.3"/></svg>
<span id="t47" class="t" style="left:358.9px;top:236.0px;font-size:15px;line-height:15px;color:#242424;transform:scaleX(0.9326);">Redo</span>
<svg class="a" style="left:727.5px;top:238px;" width="14" height="12" viewBox="0 0 14 12"><path d="M2.6 2.4 H11.4" stroke="#333" stroke-width="1.2"/><path d="M3.4 5.6 L7 9 L10.6 5.6" fill="none" stroke="#333" stroke-width="1.3"/></svg>
<div class="a" style="left:199.5px;top:133.8px;width:204.8px;height:111.4px;background:#fdfdfd;border-radius:6px;box-shadow:0 0 0 1px rgba(0,0,0,.14),0 4px 10px rgba(0,0,0,.22);"></div>
<div class="a" style="left:199.5px;top:133.8px;width:204.8px;height:36.4px;background:#f2f2f2;border-radius:6px 6px 0 0;"></div>
<div class="a" style="left:240px;top:171px;width:164.8px;height:1px;background:#dcdcdc;"></div>
<svg class="a" style="left:212px;top:138px;" width="24" height="24" viewBox="0 0 24 24"><defs><radialGradient id="bs" cx=".55" cy=".55" r=".7"><stop offset="0" stop-color="#9ccbf3"/><stop offset=".55" stop-color="#5aa6e8"/><stop offset="1" stop-color="#1a78d2"/></radialGradient></defs><rect x="1.9" y="1.8" width="14.2" height="14.2" fill="url(#bs)"/><circle cx="15.1" cy="15.1" r="6.5" fill="#f4f4f4" stroke="#333" stroke-width="1.35"/></svg>
<span id="t48" class="t" style="left:244.9px;top:143.8px;font-size:15.1px;line-height:15.1px;color:#1f1f1f;transform:scaleX(0.9404);">Change Shape</span>
<div class="a" style="left:270.2px;top:159.3px;width:7.8px;height:1.1px;background:#1f1f1f;"></div>
<svg class="a" style="left:384px;top:143px;" width="12" height="15" viewBox="0 0 12 15"><path d="M2.8 2 L9.4 7.5 L2.8 13" fill="none" stroke="#333" stroke-width="1.3" stroke-linejoin="round" stroke-linecap="round"/></svg>
<svg class="a" style="left:213px;top:179.1px;" width="22" height="19" viewBox="0 0 22 19"><path d="M10 3.1 H15.8" stroke="#bcbcbc" stroke-width="1.7"/><path d="M5.2 6.2 Q2.8 8.8 2.7 12.4 M15.9 5.1 L12.2 8.7 L16.1 12.8 M6 15.6 H16.2" fill="none" stroke="#b2b2b2" stroke-width="1.3"/>
      <rect x="4.4" y="1.1" width="4.2" height="3.9" fill="#bcbcbc"/><rect x="17" y="1.1" width="4.2" height="3.9" fill="#bcbcbc"/>
      <rect x="1" y="13.4" width="4" height="4.3" fill="#bcbcbc"/><rect x="17" y="13.4" width="4.2" height="4.3" fill="#bcbcbc"/></svg>
<span id="t49" class="t" style="left:244.9px;top:182.7px;font-size:15.1px;line-height:15.1px;color:#c1c6ca;transform:scaleX(0.9720);">Edit Points</span>
<div class="a" style="left:245.8px;top:198.7px;width:7.6px;height:1px;background:#c1c6ca;"></div>
<svg class="a" style="left:212px;top:213px;" width="24" height="24" viewBox="0 0 24 24"><path d="M4.8 9.3 V21.3 H19.3 V16.7 M11.2 3.5 H19.3 V9.3" fill="none" stroke="#b2b2b2" stroke-width="1.25"/><rect x="2.4" y="2.7" width="8.4" height="6.2" fill="#c6c6c6" stroke="#b2b2b2" stroke-width="1"/><rect x="13.6" y="9.9" width="7.7" height="6.3" fill="#efefef" stroke="#b2b2b2" stroke-width="1.25"/></svg>
<span id="t50" class="t" style="left:244.9px;top:218.7px;font-size:15.1px;line-height:15.1px;color:#c1c6ca;transform:scaleX(0.9628);">Reroute Connectors</span>
<div class="a" style="left:284.6px;top:234.4px;width:4.6px;height:1px;background:#c1c6ca;"></div>
<div class="a" style="left:405.2px;top:134.8px;width:310.9px;height:760px;background:#fff;border-radius:6px;box-shadow:0 0 0 1px rgba(0,0,0,.17),0 4px 12px rgba(0,0,0,.2);"></div>
<span id="t51" class="t" style="left:422.9px;top:147.9px;font-size:14px;line-height:14px;color:#161616;font-weight:700;transform:scaleX(1.0161);">Rectangles</span>
<span id="t52" class="t" style="left:422.9px;top:222.0px;font-size:14px;line-height:14px;color:#161616;font-weight:700;transform:scaleX(0.9803);">Basic Shapes</span>
<span id="t53" class="t" style="left:422.9px;top:367.9px;font-size:14px;line-height:14px;color:#161616;font-weight:700;transform:scaleX(1.0357);">Block Arrows</span>
<span id="t54" class="t" style="left:422.9px;top:489.8px;font-size:14px;line-height:14px;color:#161616;font-weight:700;transform:scaleX(1.0124);">Equation Shapes</span>
<span id="t55" class="t" style="left:422.9px;top:564.0px;font-size:14px;line-height:14px;color:#161616;font-weight:700;transform:scaleX(1.0456);">Flowchart</span>
<span id="t56" class="t" style="left:422.9px;top:686.1px;font-size:14px;line-height:14px;color:#161616;font-weight:700;transform:scaleX(1.0194);">Stars and Banners</span>
<span id="t57" class="t" style="left:422.9px;top:784.1px;font-size:14px;line-height:14px;color:#161616;font-weight:700;transform:scaleX(1.0220);">Callouts</span>
<svg class="a" style="left:0;top:0" width="1525" height="869" viewBox="0 0 1525 869"><g transform="translate(418,184.8)"><path d="M-9.6 -7.2 H9.6 V7.2 H-9.6 Z" fill="#f8f8f8" stroke="#404040" stroke-width="1.1" stroke-linejoin="round" /></g><g transform="translate(442,184.8)"><rect x="-9.6" y="-7.2" width="19.2" height="14.4" rx="3.2" fill="#f8f8f8" stroke="#404040" stroke-width="1.1"/></g><g transform="translate(466,184.8)"><path d="M-9.6 -7.2 H3.2 L9.6 -.8 V7.2 H-9.6 Z" fill="#f8f8f8" stroke="#404040" stroke-width="1.1" stroke-linejoin="round" /></g><g transform="translate(490,184.8)"><path d="M-9.6 -.8 L-3.2 -7.2 H3.2 L9.6 -.8 V7.2 H-9.6 Z" fill="#f8f8f8" stroke="#404040" stroke-width="1.1" stroke-linejoin="round" /></g><g transform="translate(514,184.8)"><path d="M-9.6 -7.2 H3.4 L9.6 -1 V7.2 H-3.4 L-9.6 1 Z" fill="#f8f8f8" stroke="#404040" stroke-width="1.1" stroke-linejoin="round" /></g><g transform="translate(538,184.8)"><path d="M-9.6 -4 Q-9.6 -7.2 -6.4 -7.2 H3.2 L9.6 -.8 V7.2 H-9.6 Z" fill="#f8f8f8" stroke="#404040" stroke-width="1.1" stroke-linejoin="round" /></g><g transform="translate(562,184.8)"><path d="M-9.6 -7.2 H5.6 Q9.6 -7.2 9.6 -3.2 V7.2 H-9.6 Z" fill="#f8f8f8" stroke="#404040" stroke-width="1.1" stroke-linejoin="round" /></g><g transform="translate(586,184.8)"><path d="M-9.6 -3.2 Q-9.6 -7.2 -5.6 -7.2 H5.6 Q9.6 -7.2 9.6 -3.2 V7.2 H-9.6 Z" fill="#f8f8f8" stroke="#404040" stroke-width="1.1" stroke-linejoin="round" /></g><g transform="translate(610,184.8)"><path d="M-9.6 -3.2 Q-9.6 -7.2 -5.6 -7.2 H9.6 V3.2 Q9.6 7.2 5.6 7.2 H-9.6 Z" fill="#f8f8f8" stroke="#404040" stroke-width="1.1" stroke-linejoin="round" /></g><rect x="406" y="208.0" width="288" height="1" fill="#d2d2d2"/><rect x="406.4" y="247.2" width="23.4" height="23" fill="#f0f0f0" stroke="#c9c9c9" stroke-width="1"/><g transform="translate(418,258.9)"><ellipse cx="0" cy="0" rx="9.8" ry="7.1" fill="#f8f8f8" stroke="#404040" stroke-width="1.1"/></g><g transform="translate(442,258.9)"><path d="M0.00 -9.00 L9.00 9.30 L-9.00 9.30 Z" fill="#f8f8f8" stroke="#404040" stroke-width="1.1" stroke-linejoin="round" /></g><g transform="translate(466,258.9)"><path d="M-9.20 -9.00 L9.20 9.30 L-9.20 9.30 Z" fill="#f8f8f8" stroke="#404040" stroke-width="1.1" stroke-linejoin="round" /></g><g transform="translate(490,258.9)"><path d="M-3.80 -8.40 L9.60 -8.40 L3.90 8.40 L-9.50 8.40 Z" fill="#f8f8f8" stroke="#404040" stroke-width="1.1" stroke-linejoin="round" /></g><g transform="translate(514,258.9)"><path d="M-3.70 -6.60 L3.70 -6.60 L8.60 6.20 L-8.60 6.20 Z" fill="#f8f8f8" stroke="#404040" stroke-width="1.1" stroke-linejoin="round" /></g><g transform="translate(538,258.9)"><path d="M0.00 -9.40 L9.50 0.00 L0.00 9.40 L-9.50 0.00 Z" fill="#f8f8f8" stroke="#404040" stroke-width="1.1" stroke-linejoin="round" /></g><g transform="translate(562,258.9)"><path d="M0.00 -9.40 L9.70 -1.10 L5.90 9.30 L-5.90 9.30 L-9.70 -1.10 Z" fill="#f8f8f8" stroke="#404040" stroke-width="1.1" stroke-linejoin="round" /></g><g transform="translate(586,258.9)"><path d="M-4.90 -8.40 L4.90 -8.40 L9.40 0.00 L4.90 8.40 L-4.90 8.40 L-9.40 0.00 Z" fill="#f8f8f8" stroke="#404040" stroke-width="1.1" stroke-linejoin="round" /></g><g transform="translate(610,258.9)"><path d="M3.94 -9.52 L9.52 -3.94 L9.52 3.94 L3.94 9.52 L-3.94 9.52 L-9.52 3.94 L-9.52 -3.94 L-3.94 -9.52 Z" fill="#f8f8f8" stroke="#404040" stroke-width="1.1" stroke-linejoin="round" /><text x="0" y="3.8" text-anchor="middle" font-size="10.6" fill="#6e6e6e" font-family="Liberation Sans, sans-serif" transform="scale(0.78,1)">7</text></g><g transform="translate(634,258.9)"><path d="M3.94 -9.52 L9.52 -3.94 L9.52 3.94 L3.94 9.52 L-3.94 9.52 L-9.52 3.94 L-9.52 -3.94 L-3.94 -9.52 Z" fill="#f8f8f8" stroke="#404040" stroke-width="1.1" stroke-linejoin="round" /><text x="0" y="3.8" text-anchor="middle" font-size="10.6" fill="#6e6e6e" font-family="Liberation Sans, sans-serif" transform="scale(0.78,1)">8</text></g><g transform="translate(658,258.9)"><path d="M3.94 -9.52 L9.52 -3.94 L9.52 3.94 L3.94 9.52 L-3.94 9.52 L-9.52 3.94 L-9.52 -3.94 L-3.94 -9.52 Z" fill="#f8f8f8" stroke="#404040" stroke-width="1.1" stroke-linejoin="round" /><text x="0" y="3.8" text-anchor="middle" font-size="10.6" fill="#6e6e6e" font-family="Liberation Sans, sans-serif" transform="scale(0.64,1)">10</text></g><g transform="translate(682,258.9)"><path d="M3.94 -9.52 L9.52 -3.94 L9.52 3.94 L3.94 9.52 L-3.94 9.52 L-9.52 3.94 L-9.52 -3.94 L-3.94 -9.52 Z" fill="#f8f8f8" stroke="#404040" stroke-width="1.1" stroke-linejoin="round" /><text x="0" y="3.8" text-anchor="middle" font-size="10.6" fill="#6e6e6e" font-family="Liberation Sans, sans-serif" transform="scale(0.64,1)">12</text></g><g transform="translate(418,283.0)"><path d="M0 -9.8 A9.8 9.8 0 1 0 9.8 0 H0 Z" fill="#f8f8f8" stroke="#404040" stroke-width="1.1" stroke-linejoin="round" /></g><g transform="translate(442,283.0)"><path d="M-4.2 -8.9 A9.8 9.8 0 1 0 9.2 3.4 Z" fill="#f8f8f8" stroke="#404040" stroke-width="1.1" stroke-linejoin="round" /></g><g transform="translate(466,283.0)"><path d="M0 -9.6 H9.6 V0 A9.6 9.6 0 1 1 0 -9.6 Z" fill="#f8f8f8" stroke="#404040" stroke-width="1.1" stroke-linejoin="round" /></g><g transform="translate(490,283.0)"><path d="M-9.4 -9.4 H9.4 V9.4 H-9.4 Z M-5.2 -5.2 V5.2 H5.2 V-5.2 Z" fill="#f8f8f8" stroke="#404040" stroke-width="1.1" stroke-linejoin="round" fill-rule="evenodd"/></g><g transform="translate(514,283.0)"><path d="M-9.40 -9.30 L9.40 -9.30 L5.00 -5.00 L-4.60 -5.00 L-4.60 3.60 L-9.40 8.80 Z" fill="#f8f8f8" stroke="#404040" stroke-width="1.1" stroke-linejoin="round" /></g><g transform="translate(538,283.0)"><path d="M-9.40 -9.40 L-2.30 -9.40 L-2.30 2.20 L9.40 2.20 L9.40 9.40 L-9.40 9.40 Z" fill="#f8f8f8" stroke="#404040" stroke-width="1.1" stroke-linejoin="round" /></g><g transform="translate(562,283.0)"><path d="M-9.40 0.60 L1.00 -9.30 L9.30 -9.30 L-9.40 8.80 Z" fill="#f8f8f8" stroke="#404040" stroke-width="1.1" stroke-linejoin="round" /></g><g transform="translate(586,283.0)"><path d="M-3.40 -9.40 L3.40 -9.40 L3.40 -3.40 L9.40 -3.40 L9.40 3.40 L3.40 3.40 L3.40 9.40 L-3.40 9.40 L-3.40 3.40 L-9.40 3.40 L-9.40 -3.40 L-3.40 -3.40 Z" fill="#f8f8f8" stroke="#404040" stroke-width="1.1" stroke-linejoin="round" /></g><g transform="translate(610,283.0)"><path d="M-5.4 -9.4 H5.4 A4 4 0 0 0 9.4 -5.4 V5.4 A4 4 0 0 0 5.4 9.4 H-5.4 A4 4 0 0 0 -9.4 5.4 V-5.4 A4 4 0 0 0 -5.4 -9.4 Z" fill="#f8f8f8" stroke="#404040" stroke-width="1.1" stroke-linejoin="round" /></g><g transform="translate(634,283.0)"><path d="M-7.4 -7 V7 A7.4 2.4 0 0 0 7.4 7 V-7 A7.4 2.4 0 0 0 -7.4 -7 A7.4 2.4 0 0 0 7.4 -7" fill="#f8f8f8" stroke="#404040" stroke-width="1.1" stroke-linejoin="round" /></g><g transform="translate(658,283.0)"><path d="M-9.6 -5 H4.4 V9.4 H-9.6 Z M-9.6 -5 L-5 -9.4 H9.4 L4.4 -5 M9.4 -9.4 V4.8 L4.4 9.4" fill="#f8f8f8" stroke="#404040" stroke-width="1.1" stroke-linejoin="round" /></g><g transform="translate(682,283.0)"><path d="M-9.4 -9.4 H9.4 V9.4 H-9.4 Z M-5.6 -5.6 H5.6 V5.6 H-5.6 Z M-9.4 -9.4 L-5.6 -5.6 M9.4 -9.4 L5.6 -5.6 M9.4 9.4 L5.6 5.6 M-9.4 9.4 L-5.6 5.6" fill="#f8f8f8" stroke="#404040" stroke-width="1.1" stroke-linejoin="round" /></g><g transform="translate(418,307.1)"><circle cx="0" cy="0" r="9.8" fill="#f8f8f8" stroke="#404040" stroke-width="1.1"/><circle cx="0" cy="0" r="4.7" fill="#f8f8f8" stroke="#404040" stroke-width="1.1"/></g><g transform="translate(442,307.1)"><circle cx="0" cy="0" r="9.8" fill="#f8f8f8" stroke="#404040" stroke-width="1.1"/><path d="M-3.27 -5.39 A6.3 6.3 0 0 1 5.39 3.27 Z" fill="#f8f8f8" stroke="#404040" stroke-width="1.1" stroke-linejoin="round" /><path d="M3.27 5.39 A6.3 6.3 0 0 1 -5.39 -3.27 Z" fill="#f8f8f8" stroke="#404040" stroke-width="1.1" stroke-linejoin="round" /></g><g transform="translate(466,307.1)"><path d="M-9.6 4.8 A9.6 9.6 0 0 1 9.6 4.8 H4.8 A4.8 4.8 0 0 0 -4.8 4.8 Z" fill="#f8f8f8" stroke="#404040" stroke-width="1.1" stroke-linejoin="round" /></g><g transform="translate(490,307.1)"><path d="M-9.4 -9.4 H9.4 V3.8 L3.8 9.4 H-9.4 Z M9.4 3.8 L5 5 L3.8 9.4" fill="#f8f8f8" stroke="#404040" stroke-width="1.1" stroke-linejoin="round" /></g><g transform="translate(514,307.1)"><circle cx="0" cy="0" r="9.8" fill="#f8f8f8" stroke="#404040" stroke-width="1.1"/><circle cx="-3.5" cy="-3" r="1.1" fill="none" stroke="#444" stroke-width=".9"/><circle cx="3.5" cy="-3" r="1.1" fill="none" stroke="#444" stroke-width=".9"/><path d="M-5 2.6 Q0 8.4 5 2.6" fill="none" stroke="#404040" stroke-width="1.1" stroke-linejoin="round" /></g><g transform="translate(538,307.1)"><path d="M0 -5.4 C1.6 -10.6 9.8 -10 9.6 -3.6 C9.4 1.6 3 5 0 8.8 C-3 5 -9.4 1.6 -9.6 -3.6 C-9.8 -10 -1.6 -10.6 0 -5.4 Z" fill="#f8f8f8" stroke="#404040" stroke-width="1.1" stroke-linejoin="round" /></g><g transform="translate(562,307.1)"><path d="M-3.20 -9.20 L1.60 -9.40 L3.60 -3.60 L1.60 -2.80 L6.20 1.00 L4.20 1.80 L6.40 9.40 L-1.40 3.40 L0.80 2.40 L-4.40 -1.60 L-1.80 -2.60 L-7.20 -6.40 Z" fill="#f8f8f8" stroke="#404040" stroke-width="1.1" stroke-linejoin="round" /></g><g transform="translate(586,307.1)"><circle cx="0" cy="0" r="5.3" fill="#f8f8f8" stroke="#404040" stroke-width="1.1"/><path d="M-2.2 -7.4 L0 -9.9 L2.2 -7.4 Z" fill="#f8f8f8" stroke="#404040" stroke-width=".9" stroke-linejoin="round" transform="rotate(0)"/><path d="M-2.2 -7.4 L0 -9.9 L2.2 -7.4 Z" fill="#f8f8f8" stroke="#404040" stroke-width=".9" stroke-linejoin="round" transform="rotate(45)"/><path d="M-2.2 -7.4 L0 -9.9 L2.2 -7.4 Z" fill="#f8f8f8" stroke="#404040" stroke-width=".9" stroke-linejoin="round" transform="rotate(90)"/><path d="M-2.2 -7.4 L0 -9.9 L2.2 -7.4 Z" fill="#f8f8f8" stroke="#404040" stroke-width=".9" stroke-linejoin="round" transform="rotate(135)"/><path d="M-2.2 -7.4 L0 -9.9 L2.2 -7.4 Z" fill="#f8f8f8" stroke="#404040" stroke-width=".9" stroke-linejoin="round" transform="rotate(180)"/><path d="M-2.2 -7.4 L0 -9.9 L2.2 -7.4 Z" fill="#f8f8f8" stroke="#404040" stroke-width=".9" stroke-linejoin="round" transform="rotate(225)"/><path d="M-2.2 -7.4 L0 -9.9 L2.2 -7.4 Z" fill="#f8f8f8" stroke="#404040" stroke-width=".9" stroke-linejoin="round" transform="rotate(270)"/><path d="M-2.2 -7.4 L0 -9.9 L2.2 -7.4 Z" fill="#f8f8f8" stroke="#404040" stroke-width=".9" stroke-linejoin="round" transform="rotate(315)"/></g><g transform="translate(610,307.1)"><path d="M6.2 -9.4 A9.6 9.6 0 1 0 6.2 9.4 A11.5 11.5 0 0 1 6.2 -9.4 Z" fill="#f8f8f8" stroke="#404040" stroke-width="1.1" stroke-linejoin="round" /></g><g transform="translate(634,307.1)"><path d="M-6.6 3.8 C-10.2 3.4 -10.4 -1.4 -7.6 -2.4 C-8.6 -6.6 -4 -9 -1.6 -6.6 C0 -9.6 5 -9 5.6 -5.6 C9.6 -6 10.8 -.6 7.8 .8 C10.4 3.6 7.6 7.4 4.2 6 C3.2 9.4 -1.4 9.4 -2.6 6.6 C-5 8.4 -8 6.6 -6.6 3.8 Z" fill="#f8f8f8" stroke="#404040" stroke-width="1.1" stroke-linejoin="round" /></g><g transform="translate(658,307.1)"><path d="M-9.4 -8.6 C2 -8.6 9.2 -2 9.4 9.4" fill="none" stroke="#404040" stroke-width="1.1" stroke-linejoin="round" /></g><g transform="translate(682,307.1)"><path d="M-5.4 -9.2 H-6.8 Q-9.4 -9.2 -9.4 -6.6 V6.6 Q-9.4 9.2 -6.8 9.2 H-5.4 M5.4 -9.2 H6.8 Q9.4 -9.2 9.4 -6.6 V6.6 Q9.4 9.2 6.8 9.2 H5.4" fill="none" stroke="#404040" stroke-width="1.1" stroke-linejoin="round" /></g><g transform="translate(418,331.2)"><path d="M-3.6 -9.2 C-7.4 -9.2 -5.6 -7 -5.8 -3 C-5.8 -.8 -7 0 -8.6 0 C-7 0 -5.8 .8 -5.8 3 C-5.6 7 -7.4 9.2 -3.6 9.2 M3.6 -9.2 C7.4 -9.2 5.6 -7 5.8 -3 C5.8 -.8 7 0 8.6 0 C7 0 5.8 .8 5.8 3 C5.6 7 7.4 9.2 3.6 9.2" fill="none" stroke="#404040" stroke-width="1.1" stroke-linejoin="round" /></g><g transform="translate(442,331.2)"><path d="M2.7 -9.2 H-.8 Q-3.6 -9.2 -3.6 -6.4 V6.4 Q-3.6 9.2 -.8 9.2 H2.7" fill="none" stroke="#404040" stroke-width="1.1" stroke-linejoin="round" /></g><g transform="translate(466,331.2)"><path d="M-2.5 -9.2 H.8 Q3.6 -9.2 3.6 -6.4 V6.4 Q3.6 9.2 .8 9.2 H-2.5" fill="none" stroke="#404040" stroke-width="1.1" stroke-linejoin="round" /></g><g transform="translate(490,331.2)"><path d="M2.2 -9.2 C-2 -9.2 -.6 -7 -.8 -3 C-.8 -.8 -2 0 -3.8 0 C-2 0 -.8 .8 -.8 3 C-.6 7 -2 9.2 2.2 9.2" fill="none" stroke="#404040" stroke-width="1.1" stroke-linejoin="round" /></g><g transform="translate(514,331.2)"><path d="M-2.2 -9.2 C2 -9.2 .6 -7 .8 -3 C.8 -.8 2 0 3.8 0 C2 0 .8 .8 .8 3 C.6 7 2 9.2 -2.2 9.2" fill="none" stroke="#404040" stroke-width="1.1" stroke-linejoin="round" /></g><rect x="406" y="353.9" width="288" height="1" fill="#d2d2d2"/><g transform="translate(418,404.8)"><path d="M-9.60 -3.90 L1.40 -3.90 L1.40 -8.20 L9.60 0.00 L1.40 8.20 L1.40 3.90 L-9.60 3.90 Z" fill="#f8f8f8" stroke="#404040" stroke-width="1.1" stroke-linejoin="round" /></g><g transform="translate(442,404.8)"><path d="M9.60 -3.90 L-1.40 -3.90 L-1.40 -8.20 L-9.60 0.00 L-1.40 8.20 L-1.40 3.90 L9.60 3.90 Z" fill="#f8f8f8" stroke="#404040" stroke-width="1.1" stroke-linejoin="round" /></g><g transform="translate(466,404.8)"><path d="M0.00 -9.40 L8.30 -1.20 L4.50 -1.20 L4.50 9.40 L-4.50 9.40 L-4.50 -1.20 L-8.30 -1.20 Z" fill="#f8f8f8" stroke="#404040" stroke-width="1.1" stroke-linejoin="round" /></g><g transform="translate(490,404.8)"><path d="M0.00 9.40 L8.30 1.20 L4.50 1.20 L4.50 -9.40 L-4.50 -9.40 L-4.50 1.20 L-8.30 1.20 Z" fill="#f8f8f8" stroke="#404040" stroke-width="1.1" stroke-linejoin="round" /></g><g transform="translate(514,404.8)"><path d="M-9.50 0.00 L-4.40 -5.20 L-4.40 -2.30 L4.40 -2.30 L4.40 -5.20 L9.50 0.00 L4.40 5.20 L4.40 2.30 L-4.40 2.30 L-4.40 5.20 Z" fill="#f8f8f8" stroke="#404040" stroke-width="1.1" stroke-linejoin="round" /></g><g transform="translate(538,404.8)"><path d="M0.00 -9.50 L5.20 -4.40 L2.30 -4.40 L2.30 4.40 L5.20 4.40 L0.00 9.50 L-5.20 4.40 L-2.30 4.40 L-2.30 -4.40 L-5.20 -4.40 Z" fill="#f8f8f8" stroke="#404040" stroke-width="1.1" stroke-linejoin="round" /></g><g transform="translate(562,404.8)"><path d="M0.00 -9.50 L3.80 -5.60 L1.60 -5.60 L1.60 -1.60 L5.60 -1.60 L5.60 -3.80 L9.50 0.00 L5.60 3.80 L5.60 1.60 L1.60 1.60 L1.60 5.60 L3.80 5.60 L0.00 9.50 L-3.80 5.60 L-1.60 5.60 L-1.60 1.60 L-5.60 1.60 L-5.60 3.80 L-9.50 0.00 L-5.60 -3.80 L-5.60 -1.60 L-1.60 -1.60 L-1.60 -5.60 L-3.80 -5.60 Z" fill="#f8f8f8" stroke="#404040" stroke-width="1.1" stroke-linejoin="round" /></g><g transform="translate(586,404.8)"><path d="M0.00 -8.00 L3.80 -4.00 L1.60 -4.00 L1.60 2.60 L5.40 2.60 L5.40 0.40 L9.50 4.40 L5.40 8.40 L5.40 6.20 L-5.40 6.20 L-5.40 8.40 L-9.50 4.40 L-5.40 0.40 L-5.40 2.60 L-1.60 2.60 L-1.60 -4.00 L-3.80 -4.00 Z" fill="#f8f8f8" stroke="#404040" stroke-width="1.1" stroke-linejoin="round" /></g><g transform="translate(610,404.8)"><path d="M-9.4 9.4 V-1.4 Q-9.4 -6.6 -4.2 -6.6 H4.6 V-9.4 L9.6 -4.8 L4.6 -.2 V-3 H-3.6 Q-5.8 -3 -5.8 -.8 V9.4 Z" fill="#f8f8f8" stroke="#404040" stroke-width="1.1" stroke-linejoin="round" /></g><g transform="translate(634,404.8)"><path d="M-9.4 9.4 V-2.2 A7.4 7.4 0 0 1 5.4 -2.2 V2 H9.4 L3.6 9 L-2.2 2 H1.8 V-2.2 A3.8 3.8 0 0 0 -5.8 -2.2 V9.4 Z" fill="#f8f8f8" stroke="#404040" stroke-width="1.1" stroke-linejoin="round" /></g><g transform="translate(658,404.8)"><path d="M-9.60 4.60 L-5.20 0.20 L-5.20 2.80 L3.00 2.80 L3.00 -4.80 L0.60 -4.80 L4.80 -9.40 L9.20 -4.80 L6.60 -4.80 L6.60 6.40 L-5.20 6.40 L-5.20 9.00 Z" fill="#f8f8f8" stroke="#404040" stroke-width="1.1" stroke-linejoin="round" /></g><g transform="translate(682,404.8)"><path d="M-9.60 5.40 L3.20 5.40 L3.20 -4.60 L0.60 -4.60 L5.00 -9.40 L9.60 -4.60 L6.80 -4.60 L6.80 9.20 L-9.60 9.20 Z" fill="#f8f8f8" stroke="#404040" stroke-width="1.1" stroke-linejoin="round" /></g><g transform="translate(418,428.9)"><path d="M4.2 -9.2 C-11 -9.6 -11 6 2.8 6.6 V9.4 L8.6 5 L2.8 .6 V3 C-4.6 3 -7.6 -4 4.2 -5.8 Z M-6 -3.6 C-5.6 -7 -1 -9.2 4.2 -9.2" fill="#f8f8f8" stroke="#404040" stroke-width="1.1" stroke-linejoin="round" /></g><g transform="translate(442,428.9)"><path d="M-4.2 -9.2 C11 -9.6 11 6 -2.8 6.6 V9.4 L-8.6 5 L-2.8 .6 V3 C4.6 3 7.6 -4 -4.2 -5.8 Z M6 -3.6 C5.6 -7 1 -9.2 -4.2 -9.2" fill="#f8f8f8" stroke="#404040" stroke-width="1.1" stroke-linejoin="round" /></g><g transform="translate(466,428.9)"><path d="M-9.2 -4.2 C-9.6 11 6 11 6.6 -2.8 H9.4 L5 -8.6 L.6 -2.8 H3 C3 4.6 -4 7.6 -5.8 -4.2 Z M-3.6 6 C-7 5.6 -9.2 1 -9.2 -4.2" fill="#f8f8f8" stroke="#404040" stroke-width="1.1" stroke-linejoin="round" /></g><g transform="translate(490,428.9)"><path d="M-9.2 4.2 C-9.6 -11 6 -11 6.6 2.8 H9.4 L5 8.6 L.6 2.8 H3 C3 -4.6 -4 -7.6 -5.8 4.2 Z M-3.6 -6 C-7 -5.6 -9.2 -1 -9.2 4.2" fill="#f8f8f8" stroke="#404040" stroke-width="1.1" stroke-linejoin="round" /></g><g transform="translate(514,428.9)"><path d="M-9.4 -3.9 V3.9 M-7.4 -3.9 V3.9" fill="#f8f8f8" stroke="#404040" stroke-width="1.1" stroke-linejoin="round" /><path d="M-5.00 -3.90 L1.40 -3.90 L1.40 -8.20 L9.60 0.00 L1.40 8.20 L1.40 3.90 L-5.00 3.90 Z" fill="#f8f8f8" stroke="#404040" stroke-width="1.1" stroke-linejoin="round" /></g><g transform="translate(538,428.9)"><path d="M-9.60 -3.90 L1.40 -3.90 L1.40 -8.20 L9.60 0.00 L1.40 8.20 L1.40 3.90 L-9.60 3.90 L-5.80 0.00 Z" fill="#f8f8f8" stroke="#404040" stroke-width="1.1" stroke-linejoin="round" /></g><g transform="translate(562,428.9)"><path d="M-9.60 -9.00 L3.60 -9.00 L9.60 0.00 L3.60 9.00 L-9.60 9.00 Z" fill="#f8f8f8" stroke="#404040" stroke-width="1.1" stroke-linejoin="round" /></g><g transform="translate(586,428.9)"><path d="M-9.40 -9.00 L1.60 -9.00 L9.60 0.00 L1.60 9.00 L-9.40 9.00 L-1.60 0.00 Z" fill="#f8f8f8" stroke="#404040" stroke-width="1.1" stroke-linejoin="round" /></g><g transform="translate(610,428.9)"><path d="M-9.60 -9.40 L3.00 -9.40 L3.00 -3.60 L5.60 -3.60 L5.60 -6.00 L9.60 -0.20 L5.60 5.60 L5.60 3.20 L3.00 3.20 L3.00 9.40 L-9.60 9.40 Z" fill="#f8f8f8" stroke="#404040" stroke-width="1.1" stroke-linejoin="round" /></g><g transform="translate(634,428.9)"><path d="M-9.60 -9.40 L9.60 -9.40 L9.60 2.60 L3.00 2.60 L3.00 5.40 L5.60 5.40 L0.00 9.60 L-5.60 5.40 L-3.00 5.40 L-3.00 2.60 L-9.60 2.60 Z" fill="#f8f8f8" stroke="#404040" stroke-width="1.1" stroke-linejoin="round" /></g><g transform="translate(658,428.9)"><path d="M-9.60 -0.20 L-5.20 -5.00 L-5.20 -2.60 L-2.40 -2.60 L-2.40 -9.40 L7.00 -9.40 L7.00 9.40 L-2.40 9.40 L-2.40 2.20 L-5.20 2.20 L-5.20 4.60 Z" fill="#f8f8f8" stroke="#404040" stroke-width="1.1" stroke-linejoin="round" /></g><g transform="translate(682,428.9)"><path d="M0.00 -9.40 L4.60 -4.80 L2.20 -4.80 L2.20 -1.60 L9.60 -1.60 L9.60 9.40 L-9.60 9.40 L-9.60 -1.60 L-2.20 -1.60 L-2.20 -4.80 L-4.60 -4.80 Z" fill="#f8f8f8" stroke="#404040" stroke-width="1.1" stroke-linejoin="round" /></g><g transform="translate(418,453.0)"><path d="M-9.60 0.00 L-5.60 -4.00 L-5.60 -1.60 L-4.00 -1.60 L-4.00 -9.40 L4.00 -9.40 L4.00 -1.60 L5.60 -1.60 L5.60 -4.00 L9.60 0.00 L5.60 4.00 L5.60 1.60 L4.00 1.60 L4.00 9.40 L-4.00 9.40 L-4.00 1.60 L-5.60 1.60 L-5.60 4.00 Z" fill="#f8f8f8" stroke="#404040" stroke-width="1.1" stroke-linejoin="round" /></g><g transform="translate(442,453.0)"><path d="M0.00 -9.50 L3.40 -6.20 L1.60 -6.20 L1.60 -4.40 L4.40 -4.40 L4.40 -1.60 L6.20 -1.60 L6.20 -3.40 L9.50 0.00 L6.20 3.40 L6.20 1.60 L4.40 1.60 L4.40 4.40 L1.60 4.40 L1.60 6.20 L3.40 6.20 L0.00 9.50 L-3.40 6.20 L-1.60 6.20 L-1.60 4.40 L-4.40 4.40 L-4.40 1.60 L-6.20 1.60 L-6.20 3.40 L-9.50 0.00 L-6.20 -3.40 L-6.20 -1.60 L-4.40 -1.60 L-4.40 -4.40 L-1.60 -4.40 L-1.60 -6.20 L-3.40 -6.20 Z" fill="#f8f8f8" stroke="#404040" stroke-width="1.1" stroke-linejoin="round" /></g><g transform="translate(466,453.0)"><path d="M-9.2 5.6 V-.6 A8 8 0 0 1 6.8 -.6 V3.4 H9.4 L5 8.4 L.6 3.4 H3.2 V-.6 A4.4 4.4 0 0 0 -5.6 -.6 V5.6 Z" fill="#f8f8f8" stroke="#404040" stroke-width="1.1" stroke-linejoin="round" /></g><rect x="406" y="475.8" width="288" height="1" fill="#d2d2d2"/><g transform="translate(418,526.7)"><path d="M-2.50 -9.00 L2.50 -9.00 L2.50 -2.50 L9.00 -2.50 L9.00 2.50 L2.50 2.50 L2.50 9.00 L-2.50 9.00 L-2.50 2.50 L-9.00 2.50 L-9.00 -2.50 L-2.50 -2.50 Z" fill="#f8f8f8" stroke="#404040" stroke-width="1.1" stroke-linejoin="round" /></g><g transform="translate(442,526.7)"><path d="M-9.60 -3.00 L9.60 -3.00 L9.60 3.00 L-9.60 3.00 Z" fill="#f8f8f8" stroke="#404040" stroke-width="1.1" stroke-linejoin="round" /></g><g transform="translate(466,526.7)"><path d="M-9.40 -5.60 L-5.60 -9.40 L0.00 -3.80 L5.60 -9.40 L9.40 -5.60 L3.80 0.00 L9.40 5.60 L5.60 9.40 L0.00 3.80 L-5.60 9.40 L-9.40 5.60 L-3.80 0.00 Z" fill="#f8f8f8" stroke="#404040" stroke-width="1.1" stroke-linejoin="round" /></g><g transform="translate(490,526.7)"><path d="M-9.40 -2.30 L9.40 -2.30 L9.40 2.30 L-9.40 2.30 Z" fill="#f8f8f8" stroke="#404040" stroke-width="1.1" stroke-linejoin="round" /><circle cx="0" cy="-7.2" r="1.9" fill="#f8f8f8" stroke="#404040" stroke-width="1.1"/><circle cx="0" cy="7.2" r="1.9" fill="#f8f8f8" stroke="#404040" stroke-width="1.1"/></g><g transform="translate(514,526.7)"><path d="M-9.50 -6.90 L9.50 -6.90 L9.50 -1.70 L-9.50 -1.70 Z" fill="#f8f8f8" stroke="#404040" stroke-width="1.1" stroke-linejoin="round" /><path d="M-9.50 0.90 L9.50 0.90 L9.50 6.20 L-9.50 6.20 Z" fill="#f8f8f8" stroke="#404040" stroke-width="1.1" stroke-linejoin="round" /></g><g transform="translate(538,526.7)"><path d="M-9.50 -6.40 L9.50 -6.40 L9.50 -1.40 L-9.50 -1.40 Z" fill="#f8f8f8" stroke="#404040" stroke-width="1.1" stroke-linejoin="round" /><path d="M-9.50 1.00 L9.50 1.00 L9.50 6.00 L-9.50 6.00 Z" fill="#f8f8f8" stroke="#404040" stroke-width="1.1" stroke-linejoin="round" /><path d="M4.60 -9.40 L8.60 -9.40 L-3.00 9.40 L-7.00 9.40 Z" fill="#f8f8f8" stroke="#404040" stroke-width="1.1" stroke-linejoin="round" /></g><rect x="406" y="550.0" width="288" height="1" fill="#d2d2d2"/><g transform="translate(418,600.9)"><path d="M-9.70 -7.20 L9.70 -7.20 L9.70 7.20 L-9.70 7.20 Z" fill="#f8f8f8" stroke="#404040" stroke-width="1.1" stroke-linejoin="round" /></g><g transform="translate(442,600.9)"><rect x="-9.7" y="-7.2" width="19.4" height="14.4" rx="3.4" fill="#f8f8f8" stroke="#404040" stroke-width="1.1"/></g><g transform="translate(466,600.9)"><path d="M0.00 -6.20 L9.10 0.00 L0.00 6.20 L-9.10 0.00 Z" fill="#f8f8f8" stroke="#404040" stroke-width="1.1" stroke-linejoin="round" /></g><g transform="translate(490,600.9)"><path d="M-3.80 -8.20 L9.60 -8.20 L3.90 8.40 L-9.50 8.40 Z" fill="#f8f8f8" stroke="#404040" stroke-width="1.1" stroke-linejoin="round" /></g><g transform="translate(514,600.9)"><path d="M-9.5 -9.4 H9.5 V9.4 H-9.5 Z M-5.6 -9.4 V9.4 M5.6 -9.4 V9.4" fill="#f8f8f8" stroke="#404040" stroke-width="1.1" stroke-linejoin="round" /></g><g transform="translate(538,600.9)"><path d="M-9.5 -9.4 H9.5 V9.4 H-9.5 Z M-5.8 -9.4 V9.4 M-9.5 -5.4 H9.5" fill="#f8f8f8" stroke="#404040" stroke-width="1.1" stroke-linejoin="round" /></g><g transform="translate(562,600.9)"><path d="M-9.5 -9.4 H9.5 V5.6 C4 5.6 2 9.6 -3 9.6 C-6 9.6 -8 8.4 -9.5 7.2 Z" fill="#f8f8f8" stroke="#404040" stroke-width="1.1" stroke-linejoin="round" /></g><g transform="translate(586,600.9)"><path d="M-4.6 -7.2 V-9.4 H9.6 V3 H7.4 M-7 -5 V-7.2 H7.4 V5.2 H5.2" fill="#f8f8f8" stroke="#404040" stroke-width="1.1" stroke-linejoin="round" /><path d="M-9.5 -5 H5.2 V6.2 C1.6 6.2 .4 9.4 -3.4 9.4 C-6 9.4 -8 8.6 -9.5 7.6 Z" fill="#f8f8f8" stroke="#404040" stroke-width="1.1" stroke-linejoin="round" /></g><g transform="translate(610,600.9)"><rect x="-9.7" y="-6" width="19.4" height="12" rx="6" fill="#f8f8f8" stroke="#404040" stroke-width="1.1"/></g><g transform="translate(634,600.9)"><path d="M-4.70 -6.00 L4.70 -6.00 L9.60 0.00 L4.70 6.00 L-4.70 6.00 L-9.60 0.00 Z" fill="#f8f8f8" stroke="#404040" stroke-width="1.1" stroke-linejoin="round" /></g><g transform="translate(658,600.9)"><path d="M-9.60 -3.10 L9.60 -7.10 L9.60 7.10 L-9.60 7.10 Z" fill="#f8f8f8" stroke="#404040" stroke-width="1.1" stroke-linejoin="round" /></g><g transform="translate(682,600.9)"><path d="M-9.50 -7.10 L9.50 -7.10 L4.70 7.10 L-4.70 7.10 Z" fill="#f8f8f8" stroke="#404040" stroke-width="1.1" stroke-linejoin="round" /></g><g transform="translate(418,625.0)"><circle cx="0" cy="0" r="9.2" fill="#f8f8f8" stroke="#404040" stroke-width="1.1"/></g><g transform="translate(442,625.0)"><path d="M-7.60 -9.40 L7.60 -9.40 L7.60 3.40 L0.00 9.40 L-7.60 3.40 Z" fill="#f8f8f8" stroke="#404040" stroke-width="1.1" stroke-linejoin="round" /></g><g transform="translate(466,625.0)"><path d="M-4.60 -9.40 L9.50 -9.40 L9.50 9.40 L-9.50 9.40 L-9.50 -4.40 Z" fill="#f8f8f8" stroke="#404040" stroke-width="1.1" stroke-linejoin="round" /></g><g transform="translate(490,625.0)"><path d="M-9.5 -7.4 C-6 -5 -3 -5.2 0 -7.4 C3 -9.6 6 -9.8 9.5 -7.6 V7.4 C6 5 3 5.2 0 7.4 C-3 9.6 -6 9.8 -9.5 7.6 Z" fill="#f8f8f8" stroke="#404040" stroke-width="1.1" stroke-linejoin="round" /></g><g transform="translate(514,625.0)"><circle cx="0" cy="0" r="9.2" fill="#f8f8f8" stroke="#404040" stroke-width="1.1"/><path d="M-6.5 -6.5 L6.5 6.5 M6.5 -6.5 L-6.5 6.5" fill="none" stroke="#404040" stroke-width="1.1" stroke-linejoin="round" /></g><g transform="translate(538,625.0)"><circle cx="0" cy="0" r="9.2" fill="#f8f8f8" stroke="#404040" stroke-width="1.1"/><path d="M-9.2 0 H9.2 M0 -9.2 V9.2" fill="none" stroke="#404040" stroke-width="1.1" stroke-linejoin="round" /></g><g transform="translate(562,625.0)"><path d="M-6.90 -9.00 L6.90 -9.00 L-6.90 9.00 L6.90 9.00 Z" fill="#f8f8f8" stroke="#404040" stroke-width="1.1" stroke-linejoin="round" /></g><g transform="translate(586,625.0)"><path d="M0.00 -8.80 L6.90 0.00 L0.00 8.80 L-6.90 0.00 Z" fill="#f8f8f8" stroke="#404040" stroke-width="1.1" stroke-linejoin="round" /><path d="M-6.9 0 H6.9" fill="none" stroke="#404040" stroke-width="1.1" stroke-linejoin="round" /></g><g transform="translate(610,625.0)"><path d="M0.00 -6.90 L7.40 7.50 L-7.40 7.50 Z" fill="#f8f8f8" stroke="#404040" stroke-width="1.1" stroke-linejoin="round" /></g><g transform="translate(634,625.0)"><path d="M-9.60 -9.00 L9.60 -9.00 L0.00 9.20 Z" fill="#f8f8f8" stroke="#404040" stroke-width="1.1" stroke-linejoin="round" /></g><g transform="translate(658,625.0)"><path d="M-6 -9.2 H9.4 A7 9.2 0 0 0 9.4 9.2 H-6 A5 9.2 0 0 1 -6 -9.2 Z" fill="#f8f8f8" stroke="#404040" stroke-width="1.1" stroke-linejoin="round" /></g><g transform="translate(682,625.0)"><path d="M-9.4 -9.4 H.4 A9.2 9.4 0 0 1 .4 9.4 H-9.4 Z" fill="#f8f8f8" stroke="#404040" stroke-width="1.1" stroke-linejoin="round" /></g><g transform="translate(418,649.1)"><path d="M9.6 9.4 H0 A9.4 9.4 0 1 1 8.4 4.2 H9.6 Z" fill="#f8f8f8" stroke="#404040" stroke-width="1.1" stroke-linejoin="round" /></g><g transform="translate(442,649.1)"><path d="M-9.5 -4.2 V4.2 A9.5 3 0 0 0 9.5 4.2 V-4.2 A9.5 3 0 0 0 -9.5 -4.2 A9.5 3 0 0 0 9.5 -4.2" fill="#f8f8f8" stroke="#404040" stroke-width="1.1" stroke-linejoin="round" /></g><g transform="translate(466,649.1)"><path d="M-4.4 -9.3 H4.4 A3 9.3 0 0 1 4.4 9.3 H-4.4 A3 9.3 0 0 1 -4.4 -9.3 Z M4.4 -9.3 A3 9.3 0 0 0 4.4 9.3" fill="#f8f8f8" stroke="#404040" stroke-width="1.1" stroke-linejoin="round" /></g><g transform="translate(490,649.1)"><path d="M-9.4 0 L-4.6 -9.2 H1.2 A8.4 9.2 0 0 1 1.2 9.2 H-4.6 Z" fill="#f8f8f8" stroke="#404040" stroke-width="1.1" stroke-linejoin="round" /></g><rect x="406" y="672.1" width="288" height="1" fill="#d2d2d2"/><g transform="translate(418,723.0)"><path d="M0.00 -3.40 L3.60 -9.60 L3.00 -3.00 L8.80 -5.00 L4.80 -1.20 L9.60 0.60 L5.20 1.60 L8.60 9.20 L2.40 3.60 L1.40 7.40 L-0.80 4.40 L-3.60 9.60 L-3.60 4.00 L-9.00 6.20 L-5.20 1.80 L-9.60 0.40 L-5.60 -1.40 L-9.40 -5.60 L-3.60 -3.20 L-4.40 -8.00 Z" fill="#f8f8f8" stroke="#404040" stroke-width="1.1" stroke-linejoin="round" /></g><g transform="translate(442,723.0)"><path d="M-0.40 -4.60 L2.20 -9.60 L2.60 -4.20 L7.00 -8.00 L5.00 -3.00 L9.60 -3.40 L6.00 -0.40 L9.40 2.00 L5.40 2.20 L8.60 7.60 L3.60 4.00 L3.60 8.60 L1.00 5.00 L-1.40 9.40 L-2.20 5.00 L-6.60 8.40 L-4.80 3.60 L-9.60 3.80 L-5.60 1.00 L-9.40 -2.20 L-5.40 -2.00 L-7.40 -6.40 L-3.40 -4.00 L-2.60 -8.40 Z" fill="#f8f8f8" stroke="#404040" stroke-width="1.1" stroke-linejoin="round" /></g><g transform="translate(466,723.0)"><path d="M0 -9.4 Q1 -1 9.4 0 Q1 1 0 9.4 Q-1 1 -9.4 0 Q-1 -1 0 -9.4 Z" fill="#f8f8f8" stroke="#404040" stroke-width="1.1" stroke-linejoin="round" /></g><g transform="translate(490,723.0)"><path d="M0.00 -9.90 L2.29 -3.16 L9.42 -3.06 L3.71 1.21 L5.82 8.01 L0.00 3.90 L-5.82 8.01 L-3.71 1.21 L-9.42 -3.06 L-2.29 -3.16 Z" fill="#f8f8f8" stroke="#404040" stroke-width="1.1" stroke-linejoin="round" /></g><g transform="translate(514,723.0)"><path d="M0.00 -9.60 L2.70 -4.68 L8.31 -4.80 L5.40 0.00 L8.31 4.80 L2.70 4.68 L0.00 9.60 L-2.70 4.68 L-8.31 4.80 L-5.40 0.00 L-8.31 -4.80 L-2.70 -4.68 Z" fill="#f8f8f8" stroke="#404040" stroke-width="1.1" stroke-linejoin="round" /></g><g transform="translate(538,723.0)"><path d="M0.00 -9.60 L2.43 -5.05 L7.51 -5.99 L5.46 -1.25 L9.36 2.14 L4.38 3.49 L4.17 8.65 L0.00 5.60 L-4.17 8.65 L-4.38 3.49 L-9.36 2.14 L-5.46 -1.25 L-7.51 -5.99 L-2.43 -5.05 Z" fill="#f8f8f8" stroke="#404040" stroke-width="1.1" stroke-linejoin="round" /></g><g transform="translate(562,723.0)"><path d="M3.71 -8.96 L5.44 -5.44 L8.96 -3.71 L7.70 0.00 L8.96 3.71 L5.44 5.44 L3.71 8.96 L0.00 7.70 L-3.71 8.96 L-5.44 5.44 L-8.96 3.71 L-7.70 0.00 L-8.96 -3.71 L-5.44 -5.44 L-3.71 -8.96 L-0.00 -7.70 Z" fill="#f8f8f8" stroke="#404040" stroke-width="1.1" stroke-linejoin="round" /><text x="0" y="3.7" text-anchor="middle" font-size="10.4" fill="#505050" font-family="Liberation Sans, sans-serif" transform="scale(0.8,1)">8</text></g><g transform="translate(586,723.0)"><path d="M0.00 -9.70 L2.32 -7.13 L5.70 -7.85 L6.07 -4.41 L9.23 -3.00 L7.50 0.00 L9.23 3.00 L6.07 4.41 L5.70 7.85 L2.32 7.13 L0.00 9.70 L-2.32 7.13 L-5.70 7.85 L-6.07 4.41 L-9.23 3.00 L-7.50 0.00 L-9.23 -3.00 L-6.07 -4.41 L-5.70 -7.85 L-2.32 -7.13 Z" fill="#f8f8f8" stroke="#404040" stroke-width="1" stroke-linejoin="round" /><text x="0" y="3.7" text-anchor="middle" font-size="10.4" fill="#505050" font-family="Liberation Sans, sans-serif" transform="scale(0.66,1)">10</text></g><g transform="translate(610,723.0)"><path d="M0.00 -9.80 L1.92 -7.15 L4.90 -8.49 L5.23 -5.23 L8.49 -4.90 L7.15 -1.92 L9.80 0.00 L7.15 1.92 L8.49 4.90 L5.23 5.23 L4.90 8.49 L1.92 7.15 L0.00 9.80 L-1.92 7.15 L-4.90 8.49 L-5.23 5.23 L-8.49 4.90 L-7.15 1.92 L-9.80 0.00 L-7.15 -1.92 L-8.49 -4.90 L-5.23 -5.23 L-4.90 -8.49 L-1.92 -7.15 Z" fill="#f8f8f8" stroke="#404040" stroke-width="0.95" stroke-linejoin="round" /><text x="0" y="3.7" text-anchor="middle" font-size="10.4" fill="#4a4a4a" font-family="Liberation Sans, sans-serif" transform="scale(0.66,1)">12</text></g><g transform="translate(634,723.0)"><path d="M0.00 -9.80 L1.67 -7.31 L4.25 -8.83 L4.68 -5.86 L7.66 -6.11 L6.76 -3.25 L9.55 -2.18 L7.50 0.00 L9.55 2.18 L6.76 3.25 L7.66 6.11 L4.68 5.86 L4.25 8.83 L1.67 7.31 L0.00 9.80 L-1.67 7.31 L-4.25 8.83 L-4.68 5.86 L-7.66 6.11 L-6.76 3.25 L-9.55 2.18 L-7.50 0.00 L-9.55 -2.18 L-6.76 -3.25 L-7.66 -6.11 L-4.68 -5.86 L-4.25 -8.83 L-1.67 -7.31 Z" fill="#f8f8f8" stroke="#404040" stroke-width="0.9" stroke-linejoin="round" /><text x="0" y="3.7" text-anchor="middle" font-size="10.4" fill="#4a4a4a" font-family="Liberation Sans, sans-serif" transform="scale(0.66,1)">16</text></g><g transform="translate(658,723.0)"><path d="M1.70 -9.65 L2.91 -6.91 L5.72 -7.96 L5.62 -4.96 L8.61 -4.69 L7.22 -2.03 L9.79 -0.49 L7.39 1.30 L9.03 3.81 L6.09 4.38 L6.48 7.35 L3.59 6.59 L2.65 9.43 L0.37 7.49 L-1.70 9.65 L-2.91 6.91 L-5.72 7.96 L-5.62 4.96 L-8.61 4.69 L-7.22 2.03 L-9.79 0.49 L-7.39 -1.30 L-9.03 -3.81 L-6.09 -4.38 L-6.48 -7.35 L-3.59 -6.59 L-2.65 -9.43 L-0.37 -7.49 Z" fill="#f8f8f8" stroke="#404040" stroke-width="0.9" stroke-linejoin="round" /><text x="0" y="3.7" text-anchor="middle" font-size="10.4" fill="#4a4a4a" font-family="Liberation Sans, sans-serif" transform="scale(0.66,1)">24</text></g><g transform="translate(682,723.0)"><path d="M0.85 -9.76 L2.30 -7.14 L5.01 -8.43 L5.17 -5.43 L8.17 -5.42 L7.02 -2.65 L9.71 -1.34 L7.47 0.65 L9.33 3.01 L6.45 3.83 L7.10 6.75 L4.15 6.25 L3.47 9.17 L1.03 7.43 L-0.85 9.76 L-2.30 7.14 L-5.01 8.43 L-5.17 5.43 L-8.17 5.42 L-7.02 2.65 L-9.71 1.34 L-7.47 -0.65 L-9.33 -3.01 L-6.45 -3.83 L-7.10 -6.75 L-4.15 -6.25 L-3.47 -9.17 L-1.03 -7.43 Z" fill="#f8f8f8" stroke="#404040" stroke-width="0.9" stroke-linejoin="round" /><text x="0" y="3.7" text-anchor="middle" font-size="10.4" fill="#4a4a4a" font-family="Liberation Sans, sans-serif" transform="scale(0.66,1)">32</text></g><g transform="translate(418,747.1)"><path d="M-9.6 -1.6 H-4.6 V-5.4 H4.6 V-1.6 H9.6 L7 1.8 L9.6 5.2 H3 V1.6 H-3 V5.2 H-9.6 L-7 1.8 Z M-4.6 -1.6 V1.6 M4.6 -1.6 V1.6 M-3 1.6 L-4.6 -.2 M3 1.6 L4.6 -.2" fill="#f8f8f8" stroke="#404040" stroke-width="1.1" stroke-linejoin="round" /></g><g transform="translate(442,747.1)"><path d="M-9.6 1.6 H-4.6 V5.4 H4.6 V1.6 H9.6 L7 -1.8 L9.6 -5.2 H3 V-1.6 H-3 V-5.2 H-9.6 L-7 -1.8 Z M-4.6 1.6 V-1.6 M4.6 1.6 V-1.6 M-3 -1.6 L-4.6 .2 M3 -1.6 L4.6 .2" fill="#f8f8f8" stroke="#404040" stroke-width="1.1" stroke-linejoin="round" /></g><g transform="translate(466,747.1)"><path d="M-9.6 1 Q-7 -.6 -5 -.8 V-4 Q0 -7.6 5 -4 V-.8 Q7 -.6 9.6 1 L7.4 4 L9.6 7.6 Q6 5.6 3 5.4 V2 Q0 .4 -3 2 V5.4 Q-6 5.6 -9.6 7.6 L-7.4 4 Z M-5 -.8 V2.6 L-3 2 M5 -.8 V2.6 L3 2" fill="#f8f8f8" stroke="#404040" stroke-width="1.1" stroke-linejoin="round" /></g><g transform="translate(490,747.1)"><path d="M-9.6 -1 Q-7 .6 -5 .8 V4 Q0 7.6 5 4 V.8 Q7 .6 9.6 -1 L7.4 -4 L9.6 -7.6 Q6 -5.6 3 -5.4 V-2 Q0 -.4 -3 -2 V-5.4 Q-6 -5.6 -9.6 -7.6 L-7.4 -4 Z M-5 .8 V-2.6 L-3 -2 M5 .8 V-2.6 L3 -2" fill="#f8f8f8" stroke="#404040" stroke-width="1.1" stroke-linejoin="round" /></g><g transform="translate(514,747.1)"><path d="M-5.4 -7.2 A2.1 2.1 0 0 1 -1.2 -9.4 H7.4 A2.1 2.1 0 0 1 7.4 -5.2 H5.4 V7.2 A2.1 2.1 0 0 1 3.2 9.4 H-7.4 A2.1 2.1 0 1 1 -7.4 5.2 H-5.4 Z M-3.3 -5.2 H5.4 M-3.3 -5.2 A1.05 1.05 0 1 1 -3.3 -7.3 A2.1 2.1 0 0 0 -5.4 -7.2 M-7.4 9.4 A2.1 2.1 0 0 0 -5.4 7.2 M-7.4 7.3 H-5.4" fill="#f8f8f8" stroke="#404040" stroke-width="1.1" stroke-linejoin="round" /></g><g transform="translate(538,747.1)"><path d="M-7.4 -5.2 H5.2 V-7.4 A2.1 2.1 0 0 1 9.4 -7.4 V5.2 A2.1 2.1 0 0 1 7.2 7.4 H-5.2 V9.4 H-5.2 A2.1 2.1 0 0 1 -9.4 7.4 V-3.2 A2.1 2.1 0 0 1 -7.4 -5.2 Z M-5.2 7.4 V-3.2 A2.1 2.1 0 0 1 -9.4 -3.2 M-7.3 -3.2 A1.05 1.05 0 0 1 -5.2 -3.2 M5.2 -5.2 H7.3 A2.1 2.1 0 0 0 9.4 -7.4 M7.3 -7.3 V-5.2" fill="#f8f8f8" stroke="#404040" stroke-width="1.1" stroke-linejoin="round" /></g><g transform="translate(562,747.1)"><path d="M-9.5 -7.4 C-5 -10.4 -1 -9.4 1 -7.6 C3.4 -5.4 6.4 -5.4 9.5 -8.6 V6 C6.4 9.4 3 9.6 0 7.4 C-3 5 -6 5.4 -9.5 7.4 Z" fill="#f8f8f8" stroke="#404040" stroke-width="1.1" stroke-linejoin="round" /></g><g transform="translate(586,747.1)"><path d="M-9.5 -7.8 C-7 -10 -4.6 -10 -2.4 -8.4 C0 -6.8 1.6 -7 3.4 -8.4 C5.6 -10 7.4 -9.8 9.5 -8.4 V7.8 C7 10 4.6 10 2.4 8.4 C0 6.8 -1.6 7 -3.4 8.4 C-5.6 10 -7.4 9.8 -9.5 8.4 Z" fill="#f8f8f8" stroke="#404040" stroke-width="1.1" stroke-linejoin="round" /></g><rect x="406" y="770.1" width="288" height="1" fill="#d2d2d2"/><g transform="translate(418,821.0)"><path d="M-9.6 -8.6 H9.6 V4.4 H3 L-1.2 8.2 L-5.2 4.4 H-9.6 Z" fill="#f8f8f8" stroke="#404040" stroke-width="1.1" stroke-linejoin="round" /></g><g transform="translate(442,821.0)"><path d="M-6.6 -8.6 H6.6 Q9.6 -8.6 9.6 -5.6 V1.4 Q9.6 4.4 6.6 4.4 H3 L-1.2 8.4 L-5.2 4.4 H-6.6 Q-9.6 4.4 -9.6 1.4 V-5.6 Q-9.6 -8.6 -6.6 -8.6 Z" fill="#f8f8f8" stroke="#404040" stroke-width="1.1" stroke-linejoin="round" /></g><g transform="translate(466,821.0)"><path d="M-5.2 3.8 A9.6 6.8 0 1 1 -1.4 5 L-5.6 8.4 Z" fill="#f8f8f8" stroke="#404040" stroke-width="1.1" stroke-linejoin="round" /></g><g transform="translate(490,821.0)"><path d="M-5.6 2.4 C-9 2.2 -9.4 -1.6 -6.8 -2.6 C-7.8 -6.2 -3.6 -8.6 -1.4 -6.4 C0 -9.2 4.8 -8.8 5.4 -5.6 C9 -6 10.2 -1.2 7.4 0 C9.8 2.6 7.2 6 4 4.8 C3 7.6 -1.2 7.6 -2.4 5.2 C-4.4 6.6 -7 5 -5.6 2.4 Z" fill="#f8f8f8" stroke="#404040" stroke-width="1.1" stroke-linejoin="round" /><circle cx="-5.8" cy="6.2" r="1.2" fill="#f8f8f8" stroke="#404040" stroke-width="1.1"/><circle cx="-8.6" cy="9" r=".8" fill="#404040"/></g><g transform="translate(514,821.0)"><rect x="-2.2" y="-6.3" width="11.7" height="11.4" fill="#f8f8f8" stroke="#404040" stroke-width="1.1" /><path d="M-2.2 -1.4 L-9.6 5.6" fill="none" stroke="#404040" stroke-width="1.2" stroke-linejoin="round" /></g><g transform="translate(538,821.0)"><rect x="-2.2" y="-6.3" width="11.7" height="11.4" fill="#f8f8f8" stroke="#404040" stroke-width="1.1" /><path d="M-2.2 -1.2 H-6.4 L-9 7.4" fill="none" stroke="#404040" stroke-width="1.2" stroke-linejoin="round" /></g><g transform="translate(562,821.0)"><rect x="-2.2" y="-6.3" width="11.7" height="11.4" fill="#f8f8f8" stroke="#404040" stroke-width="1.1" /><path d="M-2.2 -1.2 H-9.4 V5.2 L-4 8.6" fill="none" stroke="#404040" stroke-width="1.2" stroke-linejoin="round" /></g><g transform="translate(586,821.0)"><rect x="-1.2" y="-6.3" width="10.7" height="11.4" fill="#f8f8f8" stroke="#404040" stroke-width="1.25" stroke-dasharray="2.3 1.3"/><path d="M-3.6 -6.6 V5.4" fill="none" stroke="#404040" stroke-width="1.2" stroke-linejoin="round" /><path d="M-3.6 -1.4 L-9.6 5.6" fill="none" stroke="#404040" stroke-width="1.2" stroke-linejoin="round" /></g><g transform="translate(610,821.0)"><rect x="-1.2" y="-6.3" width="10.7" height="11.4" fill="#f8f8f8" stroke="#404040" stroke-width="1.25" stroke-dasharray="2.3 1.3"/><path d="M-3.6 -6.6 V5.4" fill="none" stroke="#404040" stroke-width="1.2" stroke-linejoin="round" /><path d="M-3.6 -1.2 H-6.4 L-9 7.4" fill="none" stroke="#404040" stroke-width="1.2" stroke-linejoin="round" /></g><g transform="translate(634,821.0)"><rect x="-1.2" y="-6.3" width="10.7" height="11.4" fill="#f8f8f8" stroke="#404040" stroke-width="1.25" stroke-dasharray="2.3 1.3"/><path d="M-3.6 -6.6 V5.4" fill="none" stroke="#404040" stroke-width="1.2" stroke-linejoin="round" /><path d="M-3.6 -1.2 H-9.4 V5.2 L-4 8.6" fill="none" stroke="#404040" stroke-width="1.2" stroke-linejoin="round" /></g><g transform="translate(658,821.0)"><rect x="-2.2" y="-6.3" width="11.7" height="11.4" fill="#f8f8f8" stroke="#404040" stroke-width="1.25" stroke-dasharray="2.3 1.3"/><path d="M-2.2 -1.4 L-9.6 5.6" fill="none" stroke="#404040" stroke-width="1.2" stroke-linejoin="round" /></g><g transform="translate(682,821.0)"><rect x="-2.2" y="-6.3" width="11.7" height="11.4" fill="#f8f8f8" stroke="#404040" stroke-width="1.25" stroke-dasharray="2.3 1.3"/><path d="M-2.2 -1.2 H-6.4 L-9 7.4" fill="none" stroke="#404040" stroke-width="1.2" stroke-linejoin="round" /></g><g transform="translate(418,845.1)"><rect x="-2.2" y="-6.3" width="11.7" height="11.4" fill="#f8f8f8" stroke="#404040" stroke-width="1.25" stroke-dasharray="2.3 1.3"/><path d="M-2.2 -1.2 H-9.4 V5.2 L-4 8.6" fill="none" stroke="#404040" stroke-width="1.2" stroke-linejoin="round" /></g><g transform="translate(442,845.1)"><rect x="-1.2" y="-6.3" width="10.7" height="11.4" fill="#f8f8f8" stroke="#404040" stroke-width="1.1" /><path d="M-3.6 -6.6 V5.4" fill="none" stroke="#404040" stroke-width="1.2" stroke-linejoin="round" /><path d="M-3.6 -1.4 L-9.6 5.6" fill="none" stroke="#404040" stroke-width="1.2" stroke-linejoin="round" /></g><g transform="translate(466,845.1)"><rect x="-1.2" y="-6.3" width="10.7" height="11.4" fill="#f8f8f8" stroke="#404040" stroke-width="1.1" /><path d="M-3.6 -6.6 V5.4" fill="none" stroke="#404040" stroke-width="1.2" stroke-linejoin="round" /><path d="M-3.6 -1.2 H-6.4 L-9 7.4" fill="none" stroke="#404040" stroke-width="1.2" stroke-linejoin="round" /></g><g transform="translate(490,845.1)"><rect x="-1.2" y="-6.3" width="10.7" height="11.4" fill="#f8f8f8" stroke="#404040" stroke-width="1.1" /><path d="M-3.6 -6.6 V5.4" fill="none" stroke="#404040" stroke-width="1.2" stroke-linejoin="round" /><path d="M-3.6 -1.2 H-9.4 V5.2 L-4 8.6" fill="none" stroke="#404040" stroke-width="1.2" stroke-linejoin="round" /></g><rect x="406" y="867.8" width="288" height="1" fill="#d2d2d2"/></svg>
<svg class="a" style="left:0;top:0;pointer-events:none" width="1525" height="869"><polygon points="407.7,272.0 405.2,295.8 401.4,290.5 330.6,440.2 326.6,438.2 397.4,288.6 390.9,289.1" fill="#ee3a3c"/></svg>
<svg class="a" style="left:427px;top:264px;" width="16" height="26" viewBox="0 0 16 26"><path d="M2.4 3 V19.5 L6.3 16.3 L8.9 21.8 L11.6 20.7 L9.3 15.5 H13.9 Z" fill="#fff" stroke="#111" stroke-width="1.15" stroke-linejoin="miter"/></svg>
</div></body></html>
